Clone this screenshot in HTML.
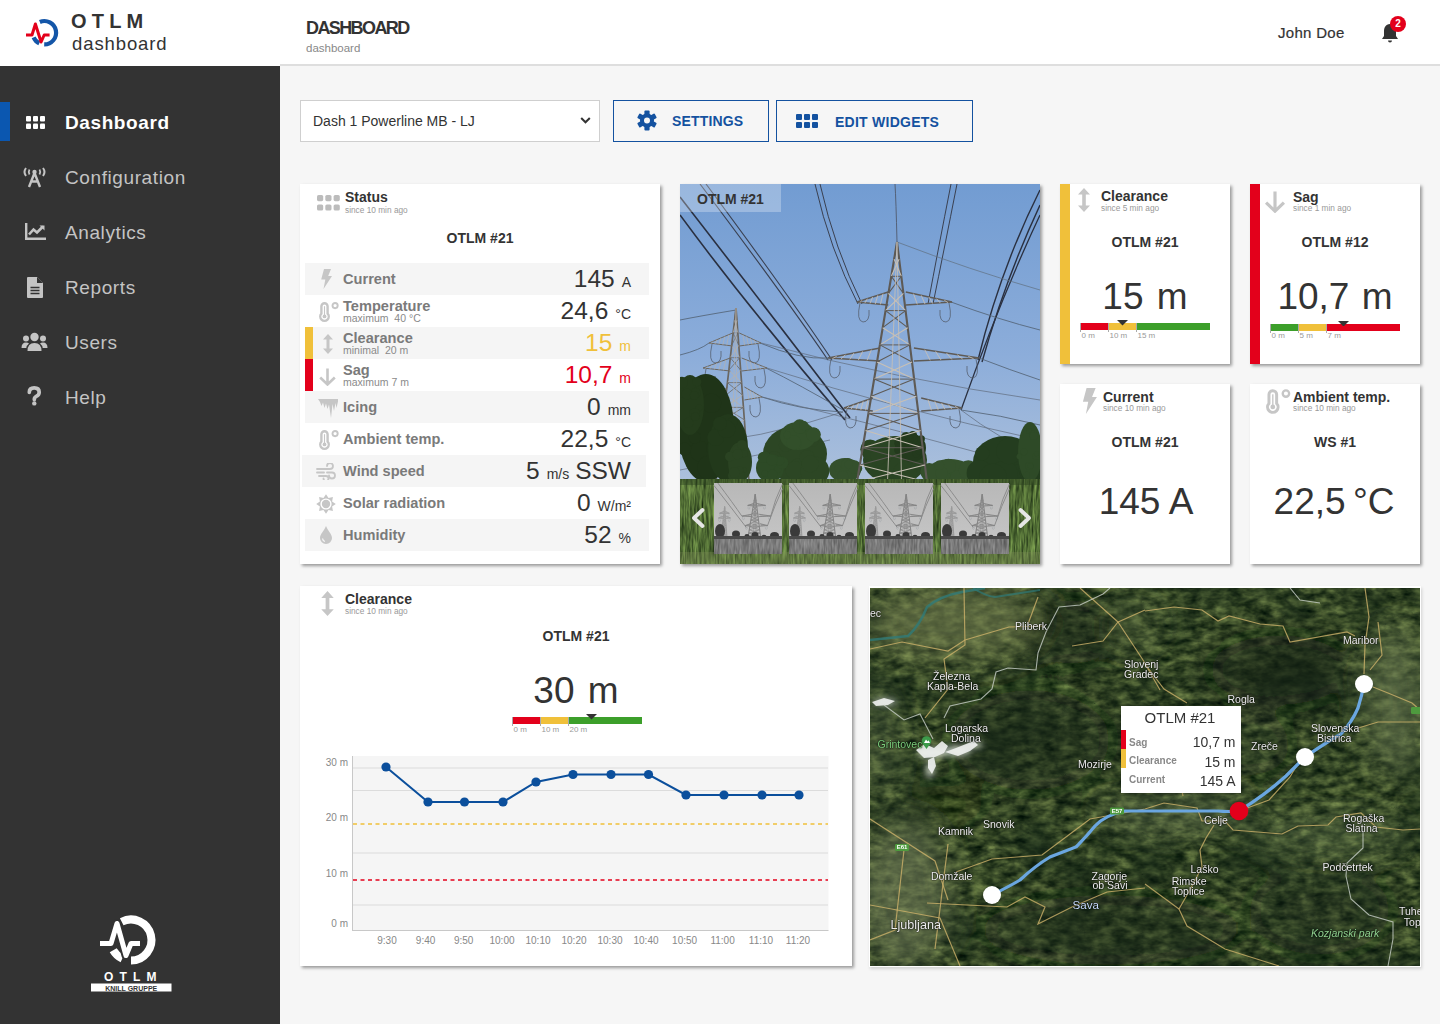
<!DOCTYPE html>
<html><head><meta charset="utf-8">
<style>
*{box-sizing:border-box;margin:0;padding:0}
html,body{width:1440px;height:1024px;overflow:hidden;background:#f6f6f6;font-family:"Liberation Sans",sans-serif;color:#333}
.abs{position:absolute}
#hdr{position:absolute;left:0;top:0;width:1440px;height:66px;background:#fff}
#side{position:absolute;left:0;top:66px;width:280px;height:958px;background:#333}
.nav{position:absolute;left:65px;font-size:19px;color:#c4c4c4;letter-spacing:0.6px;white-space:nowrap;line-height:19px}
.nav.act{color:#fff;font-weight:bold}
.nico{position:absolute}
.card{position:absolute;background:#fff;box-shadow:2px 2px 3px rgba(0,0,0,0.38)}
.t{position:absolute;white-space:nowrap}
</style></head>
<body>
<div id="hdr">
  <!-- logo -->
  <svg class="abs" style="left:20px;top:14px" width="40" height="40" viewBox="20 14 40 40">
    <path d="M39.83 21.98 A11.7 11.7 0 1 1 44.2 44.45" fill="none" stroke="#1456a8" stroke-width="4.2"/>
    <path d="M39.27 43.27 A11.7 11.7 0 0 1 33.63 37.32" fill="none" stroke="#1456a8" stroke-width="4.2"/>
    <path d="M26 35 H32 L35.4 24 L41.1 42 L44.2 35 H49.6" fill="none" stroke="#e3001b" stroke-width="3" stroke-linejoin="round"/>
  </svg>
  <div class="abs" style="left:71px;top:11px;font-size:20px;font-weight:bold;letter-spacing:5.2px;color:#333;line-height:20px">OTLM</div>
  <div class="abs" style="left:72px;top:34px;font-size:18.5px;letter-spacing:0.9px;color:#333;line-height:20px">dashboard</div>

  <div class="abs" style="left:306px;top:19px;font-size:18px;font-weight:bold;color:#333;line-height:18px;letter-spacing:-1.6px">DASHBOARD</div>
  <div class="abs" style="left:306px;top:42px;font-size:11.5px;color:#888;line-height:13px">dashboard</div>

  <div class="abs" style="left:1278px;top:24px;font-size:15px;color:#333;letter-spacing:0.3px;line-height:18px;-webkit-text-stroke:0.2px">John Doe</div>
  <svg class="abs" style="left:1380px;top:22px" width="20" height="22" viewBox="0 0 20 22">
    <path d="M10 2 C5.5 2 4 6 4 9.5 V14 L2 17 H18 L16 14 V9.5 C16 6 14.5 2 10 2Z" fill="#333"/>
    <path d="M8 18.5 H12 A2 2 0 0 1 8 18.5Z" fill="#333"/>
  </svg>
  <div class="abs" style="left:1390px;top:16px;width:16px;height:16px;border-radius:50%;background:#e3001b;color:#fff;font-size:10px;font-weight:bold;text-align:center;line-height:16px">2</div>
</div>

<div class="abs" style="left:280px;top:64px;width:1160px;height:2px;background:#dedede"></div>
<div id="side">
  <div class="abs" style="left:0;top:36px;width:10px;height:39px;background:#0b57b0"></div>
</div>
<div class="nav act" style="top:113px">Dashboard</div>
<div class="nav" style="top:168px">Configuration</div>
<div class="nav" style="top:223px">Analytics</div>
<div class="nav" style="top:278px">Reports</div>
<div class="nav" style="top:333px">Users</div>
<div class="nav" style="top:388px">Help</div>

<!-- sidebar icons -->
<svg class="abs" style="left:26px;top:116px" width="19" height="13" viewBox="0 0 19 13" fill="#fff">
 <rect x="0" y="0" width="5" height="5.5" rx="1"/><rect x="7" y="0" width="5" height="5.5" rx="1"/><rect x="14" y="0" width="5" height="5.5" rx="1"/>
 <rect x="0" y="7.5" width="5" height="5.5" rx="1"/><rect x="7" y="7.5" width="5" height="5.5" rx="1"/><rect x="14" y="7.5" width="5" height="5.5" rx="1"/>
</svg>
<svg class="abs" style="left:21px;top:166px" width="27" height="22" viewBox="0 0 27 22" fill="none" stroke="#c4c4c4">
 <path d="M5 2 Q2 6 5 10" stroke-width="2"/><path d="M22 2 Q25 6 22 10" stroke-width="2"/>
 <path d="M8.5 3.5 Q7 6 8.5 8.5" stroke-width="1.8"/><path d="M18.5 3.5 Q20 6 18.5 8.5" stroke-width="1.8"/>
 <circle cx="13.5" cy="6" r="2.2" fill="#c4c4c4" stroke="none"/>
 <path d="M13.5 7 L8 21 M13.5 7 L19 21 M10 15.5 H17" stroke-width="2.4"/>
</svg>
<svg class="abs" style="left:25px;top:223px" width="21" height="17" viewBox="0 0 21 17" fill="none" stroke="#c4c4c4">
 <path d="M1.2 0 V15.8 H21" stroke-width="2.4"/>
 <path d="M4 11.5 L8.5 6.5 L12 9.5 L18 3.5" stroke-width="2.6"/>
 <path d="M14.5 2.5 H19.5 V7.5Z" fill="#c4c4c4" stroke="none"/>
</svg>
<svg class="abs" style="left:27px;top:277px" width="16" height="21" viewBox="0 0 16 21">
 <path d="M0 1 Q0 0 1 0 H10 L16 6 V20 Q16 21 15 21 H1 Q0 21 0 20Z" fill="#c4c4c4"/>
 <path d="M10 0 V6 H16" fill="#333"/>
 <path d="M3.5 10.5 H12.5 M3.5 13.5 H12.5 M3.5 16.5 H12.5" stroke="#333" stroke-width="1.3"/>
</svg>
<svg class="abs" style="left:21px;top:332px" width="27" height="20" viewBox="0 0 27 20" fill="#c4c4c4">
 <circle cx="13.5" cy="5" r="4.2"/><circle cx="5" cy="6.5" r="3"/><circle cx="22" cy="6.5" r="3"/>
 <path d="M6.5 19 Q6.5 11 13.5 11 Q20.5 11 20.5 19Z"/>
 <path d="M0.5 16 Q0.5 10.5 5 10.5 Q7 10.5 8 11.5 Q5.5 13.5 5.3 16Z"/>
 <path d="M26.5 16 Q26.5 10.5 22 10.5 Q20 10.5 19 11.5 Q21.5 13.5 21.7 16Z"/>
</svg>
<svg class="abs" style="left:20px;top:380px" width="30" height="30" viewBox="20 380 30 30"><path d="M29.3 392.3 Q29.3 387.8 34.2 387.8 Q39.2 387.8 39.2 392.2 Q39.2 394.9 36.2 396.4 Q34.3 397.4 34.3 399.6" fill="none" stroke="#c4c4c4" stroke-width="3.7" stroke-linecap="round"/><circle cx="34.3" cy="403.4" r="2.2" fill="#c4c4c4"/></svg>

<!-- toolbar -->
<div class="abs" style="left:300px;top:100px;width:300px;height:42px;background:#fff;border:1px solid #cfcfcf"></div>
<div class="abs" style="left:313px;top:113px;font-size:14px;color:#333;line-height:16px">Dash 1 Powerline MB - LJ</div>
<svg class="abs" style="left:580px;top:116px" width="11" height="9" viewBox="0 0 11 9"><path d="M1.2 2 L5.5 6.3 L9.8 2" fill="none" stroke="#333" stroke-width="2"/></svg>
<div class="abs" style="left:613px;top:100px;width:156px;height:42px;border:1.5px solid #1452a0"></div>
<div class="abs" style="left:776px;top:100px;width:197px;height:42px;border:1.5px solid #1452a0"></div>
<div class="abs" style="left:672px;top:113px;font-size:14px;font-weight:bold;color:#1452a0;letter-spacing:0.15px;line-height:16px">SETTINGS</div>
<div class="abs" style="left:835px;top:114px;font-size:14px;font-weight:bold;color:#1452a0;letter-spacing:0.25px;line-height:16px">EDIT WIDGETS</div>
<svg class="abs" style="left:637px;top:110px" width="20" height="21" viewBox="-10 -10.5 20 21">
 <g fill="#1452a0">
 <circle r="7"/>
 <rect x="-2.6" y="-10" width="5.2" height="5" rx="1"/><rect x="-2.6" y="5" width="5.2" height="5" rx="1"/>
 <rect x="-2.6" y="-10" width="5.2" height="5" rx="1" transform="rotate(60)"/><rect x="-2.6" y="5" width="5.2" height="5" rx="1" transform="rotate(60)"/>
 <rect x="-2.6" y="-10" width="5.2" height="5" rx="1" transform="rotate(120)"/><rect x="-2.6" y="5" width="5.2" height="5" rx="1" transform="rotate(120)"/>
 </g>
 <circle r="3" fill="#f6f6f6"/>
</svg>
<svg class="abs" style="left:796px;top:114px" width="22" height="14" viewBox="0 0 22 14" fill="#1452a0">
 <rect x="0" y="0" width="6" height="6" rx="1"/><rect x="8" y="0" width="6" height="6" rx="1"/><rect x="16" y="0" width="6" height="6" rx="1"/>
 <rect x="0" y="8" width="6" height="6" rx="1"/><rect x="8" y="8" width="6" height="6" rx="1"/><rect x="16" y="8" width="6" height="6" rx="1"/>
</svg>




<div class="card" style="left:300px;top:184px;width:360px;height:380px"></div>
<svg class="abs" style="left:317px;top:195px;" width="23" height="16" viewBox="0 0 23 16"><g fill="#bcbcbc"><rect x="0" y="0" width="6.2" height="6.2" rx="1.6"/><rect x="0" y="9.4" width="6.2" height="6.2" rx="1.6"/><rect x="8.3" y="0" width="6.2" height="6.2" rx="1.6"/><rect x="8.3" y="9.4" width="6.2" height="6.2" rx="1.6"/><rect x="16.6" y="0" width="6.2" height="6.2" rx="1.6"/><rect x="16.6" y="9.4" width="6.2" height="6.2" rx="1.6"/></g></svg>
<div class="t" style="left:345px;top:190.15px;font-size:14px;line-height:14px;color:#333;font-weight:bold;">Status</div>
<div class="t" style="left:345px;top:205.97px;font-size:8.3px;line-height:8.3px;color:#999;">since 10 min ago</div>
<div class="t" style="left:180px;width:600px;text-align:center;top:231.15px;font-size:14px;line-height:14px;color:#333;font-weight:bold;">OTLM #21</div>
<div class="abs" style="left:305px;top:263px;width:344px;height:32px;background:#f5f5f5"></div>
<div class="t" style="left:343px;top:271.64px;font-size:14.6px;line-height:14.6px;color:#7a7a7a;font-weight:bold;">Current</div>
<div class="t" style="left:330px;top:267.26px;width:301px;text-align:right;font-size:24.5px;line-height:24.5px;color:#333;white-space:nowrap">145<span style="font-size:14px;margin-left:7px">A</span></div>
<div class="t" style="left:343px;top:299.14px;font-size:14.6px;line-height:14.6px;color:#7a7a7a;font-weight:bold;">Temperature</div>
<div class="t" style="left:343px;top:312.61px;font-size:10.5px;line-height:10.5px;color:#8a8a8a;">maximum&nbsp; 40 °C</div>
<div class="t" style="left:330px;top:299.26px;width:301px;text-align:right;font-size:24.5px;line-height:24.5px;color:#333;white-space:nowrap">24,6<span style="font-size:14px;margin-left:7px">°C</span></div>
<div class="abs" style="left:305px;top:327px;width:344px;height:32px;background:#f5f5f5"></div>
<div class="abs" style="left:305px;top:327px;width:8px;height:32px;background:#f0c03a"></div>
<div class="t" style="left:343px;top:331.14px;font-size:14.6px;line-height:14.6px;color:#7a7a7a;font-weight:bold;">Clearance</div>
<div class="t" style="left:343px;top:344.61px;font-size:10.5px;line-height:10.5px;color:#8a8a8a;">minimal&nbsp; 20 m</div>
<div class="t" style="left:330px;top:331.26px;width:301px;text-align:right;font-size:24.5px;line-height:24.5px;color:#f0c03a;white-space:nowrap">15<span style="font-size:14px;margin-left:7px">m</span></div>
<div class="abs" style="left:305px;top:359px;width:8px;height:32px;background:#e3001b"></div>
<div class="t" style="left:343px;top:363.14px;font-size:14.6px;line-height:14.6px;color:#7a7a7a;font-weight:bold;">Sag</div>
<div class="t" style="left:343px;top:376.61px;font-size:10.5px;line-height:10.5px;color:#8a8a8a;">maximum 7 m</div>
<div class="t" style="left:330px;top:363.26px;width:301px;text-align:right;font-size:24.5px;line-height:24.5px;color:#e3001b;white-space:nowrap">10,7<span style="font-size:14px;margin-left:7px">m</span></div>
<div class="abs" style="left:305px;top:391px;width:344px;height:32px;background:#f5f5f5"></div>
<div class="t" style="left:343px;top:399.64px;font-size:14.6px;line-height:14.6px;color:#7a7a7a;font-weight:bold;">Icing</div>
<div class="t" style="left:330px;top:395.26px;width:301px;text-align:right;font-size:24.5px;line-height:24.5px;color:#333;white-space:nowrap">0<span style="font-size:14px;margin-left:7px">mm</span></div>
<div class="t" style="left:343px;top:431.64px;font-size:14.6px;line-height:14.6px;color:#7a7a7a;font-weight:bold;">Ambient temp.</div>
<div class="t" style="left:330px;top:427.26px;width:301px;text-align:right;font-size:24.5px;line-height:24.5px;color:#333;white-space:nowrap">22,5<span style="font-size:14px;margin-left:7px">°C</span></div>
<div class="abs" style="left:302px;top:455px;width:344px;height:32px;background:#f5f5f5"></div>
<div class="t" style="left:343px;top:463.64px;font-size:14.6px;line-height:14.6px;color:#7a7a7a;font-weight:bold;">Wind speed</div>
<div class="t" style="left:330px;top:459.26px;width:301px;text-align:right;font-size:24.5px;line-height:24.5px;color:#333;white-space:nowrap">5<span style="font-size:14px;margin-left:7px;margin-right:6px">m/s</span>SSW</div>
<div class="t" style="left:343px;top:495.64px;font-size:14.6px;line-height:14.6px;color:#7a7a7a;font-weight:bold;">Solar radiation</div>
<div class="t" style="left:330px;top:491.26px;width:301px;text-align:right;font-size:24.5px;line-height:24.5px;color:#333;white-space:nowrap">0<span style="font-size:14px;margin-left:7px">W/m²</span></div>
<div class="abs" style="left:305px;top:519px;width:344px;height:32px;background:#f5f5f5"></div>
<div class="t" style="left:343px;top:527.64px;font-size:14.6px;line-height:14.6px;color:#7a7a7a;font-weight:bold;">Humidity</div>
<div class="t" style="left:330px;top:523.26px;width:301px;text-align:right;font-size:24.5px;line-height:24.5px;color:#333;white-space:nowrap">52<span style="font-size:14px;margin-left:7px">%</span></div>
<svg class="abs" style="left:319px;top:269px;" width="13" height="20" viewBox="0 0 13 20"><path d="M5 0 H12 L9.2 7 H13 L4.5 20 L6.3 10.5 H2.2 Z" fill="#c6c6c6"/></svg>
<svg class="abs" style="left:319px;top:302px;" width="21" height="20" viewBox="0 0 21 20"><path d="M2.4 11.6 V4.35 A3.1 3.1 0 0 1 8.6 4.35 V11.6 A4.25 4.25 0 1 1 2.4 11.6 Z" fill="none" stroke="#c6c6c6" stroke-width="2.4"/><circle cx="5.5" cy="14.4" r="1.9" fill="#c6c6c6"/><rect x="4.95" y="4.2" width="1.1" height="10" fill="#c6c6c6"/><circle cx="16.1" cy="3.6" r="2.6" fill="none" stroke="#c6c6c6" stroke-width="1.9"/></svg>
<svg class="abs" style="left:323px;top:334px;" width="10" height="20" viewBox="0 0 10 20"><path d="M5 0 L10 5.5 H6.5 V14.5 H10 L5 20 L0 14.5 H3.5 V5.5 H0Z" fill="#c6c6c6"/></svg>
<svg class="abs" style="left:319px;top:368px;" width="17" height="18" viewBox="0 0 17 18"><path d="M8.5 0.5 V16.5 M1.2 9.5 L8.5 16.5 L15.8 9.5" fill="none" stroke="#c6c6c6" stroke-width="2.6"/></svg>
<svg class="abs" style="left:318px;top:399px;" width="20" height="19" viewBox="0 0 20 19"><path d="M0 0 H20 V2.5 L18.5 9 L17.5 4 L16 12 L14.5 5 L13 19 L11 5.5 L9.5 10 L8 4.5 L6.5 9 L5 3.5 L3.5 7 L2 3Z" fill="#c6c6c6"/></svg>
<svg class="abs" style="left:319px;top:430px;" width="21" height="20" viewBox="0 0 21 20"><path d="M2.4 11.6 V4.35 A3.1 3.1 0 0 1 8.6 4.35 V11.6 A4.25 4.25 0 1 1 2.4 11.6 Z" fill="none" stroke="#c6c6c6" stroke-width="2.4"/><circle cx="5.5" cy="14.4" r="1.9" fill="#c6c6c6"/><rect x="4.95" y="4.2" width="1.1" height="10" fill="#c6c6c6"/><circle cx="16.1" cy="3.6" r="2.6" fill="none" stroke="#c6c6c6" stroke-width="1.9"/></svg>
<svg class="abs" style="left:316px;top:463px;" width="21" height="17" viewBox="0 0 21 17"><g fill="none" stroke="#c6c6c6" stroke-width="1.8" stroke-linecap="round"><path d="M1 6 H14 A3 3 0 1 0 11 3"/><path d="M1 9.5 H8"/><path d="M11 9.5 H16 A3 3 0 1 1 13 12.5"/><path d="M3 13 H10 A2.5 2.5 0 1 1 7.5 15.5"/></g></svg>
<svg class="abs" style="left:316px;top:494px;" width="20" height="20" viewBox="-10 -10 20 20"><polygon points="0.00,-9.80 2.53,-6.10 6.93,-6.93 6.10,-2.53 9.80,0.00 6.10,2.53 6.93,6.93 2.53,6.10 0.00,9.80 -2.53,6.10 -6.93,6.93 -6.10,2.53 -9.80,0.00 -6.10,-2.53 -6.93,-6.93 -2.53,-6.10" fill="#c6c6c6"/><circle r="5.6" fill="#fff"/><circle r="4.2" fill="#c6c6c6"/></svg>
<svg class="abs" style="left:319px;top:526px;" width="14" height="18" viewBox="0 0 14 18"><path d="M7 0 C9 5 13 8 13 12 A6 6 0 0 1 1 12 C1 8 5 5 7 0Z" fill="#c6c6c6"/><path d="M3.5 12.5 A3.5 3.5 0 0 0 6 15.5" fill="none" stroke="#f5f5f5" stroke-width="1.3"/></svg>
<div class="card" style="left:1060px;top:184px;width:170px;height:180px"></div>
<div class="abs" style="left:1060px;top:184px;width:10px;height:180px;background:#f0c03a"></div>
<svg class="abs" style="left:1078px;top:188px;" width="12" height="24" viewBox="0 0 10 20"><path d="M5 0 L10 5.5 H6.5 V14.5 H10 L5 20 L0 14.5 H3.5 V5.5 H0Z" fill="#c6c6c6"/></svg>
<div class="t" style="left:1101px;top:188.65px;font-size:14px;line-height:14px;color:#333;font-weight:bold;">Clearance</div>
<div class="t" style="left:1101px;top:203.97px;font-size:8.3px;line-height:8.3px;color:#999;">since 5 min ago</div>
<div class="t" style="left:845px;width:600px;text-align:center;top:234.65px;font-size:14px;line-height:14px;color:#333;font-weight:bold;">OTLM #21</div>
<div class="t" style="left:845px;width:600px;text-align:center;top:278.18px;font-size:37px;line-height:37px;color:#333;word-spacing:3px">15 m</div>
<div class="abs" style="left:1080px;top:323px;width:28px;height:7px;background:#e3001b"></div>
<div class="abs" style="left:1108px;top:323px;width:28px;height:7px;background:#f0c03a"></div>
<div class="abs" style="left:1136px;top:323px;width:74px;height:7px;background:#3c9f2a"></div>
<div class="abs" style="left:1080px;top:323px;width:1px;height:9px;background:#aaa"></div>
<div class="abs" style="left:1108px;top:323px;width:1px;height:9px;background:#aaa"></div>
<div class="abs" style="left:1136px;top:323px;width:1px;height:9px;background:#aaa"></div>
<div class="t" style="left:1081.5px;top:331.73px;font-size:8px;line-height:8px;color:#999;">0 m</div>
<div class="t" style="left:1109.5px;top:331.73px;font-size:8px;line-height:8px;color:#999;">10 m</div>
<div class="t" style="left:1137.5px;top:331.73px;font-size:8px;line-height:8px;color:#999;">15 m</div>
<svg class="abs" style="left:1116.5px;top:320px;" width="11" height="5.5" viewBox="0 0 11 5.5"><path d="M0 0 H11 L5.5 5.5Z" fill="#333"/></svg>
<div class="card" style="left:1250px;top:184px;width:170px;height:180px"></div>
<div class="abs" style="left:1250px;top:184px;width:10px;height:180px;background:#e3001b"></div>
<svg class="abs" style="left:1264px;top:191px;" width="22" height="22" viewBox="0 0 17 18"><path d="M8.5 0.5 V16.5 M1.2 9.5 L8.5 16.5 L15.8 9.5" fill="none" stroke="#c6c6c6" stroke-width="2.6"/></svg>
<div class="t" style="left:1293px;top:189.65px;font-size:14px;line-height:14px;color:#333;font-weight:bold;">Sag</div>
<div class="t" style="left:1293px;top:204.47px;font-size:8.3px;line-height:8.3px;color:#999;">since 1 min ago</div>
<div class="t" style="left:1035px;width:600px;text-align:center;top:235.15px;font-size:14px;line-height:14px;color:#333;font-weight:bold;">OTLM #12</div>
<div class="t" style="left:1035px;width:600px;text-align:center;top:278.18px;font-size:37px;line-height:37px;color:#333;word-spacing:2px">10,7 m</div>
<div class="abs" style="left:1270px;top:323.5px;width:28px;height:7px;background:#3c9f2a"></div>
<div class="abs" style="left:1298px;top:323.5px;width:28px;height:7px;background:#f0c03a"></div>
<div class="abs" style="left:1326px;top:323.5px;width:74px;height:7px;background:#e3001b"></div>
<div class="abs" style="left:1270px;top:323.5px;width:1px;height:9px;background:#aaa"></div>
<div class="abs" style="left:1298px;top:323.5px;width:1px;height:9px;background:#aaa"></div>
<div class="abs" style="left:1326px;top:323.5px;width:1px;height:9px;background:#aaa"></div>
<div class="t" style="left:1271.5px;top:332.23px;font-size:8px;line-height:8px;color:#999;">0 m</div>
<div class="t" style="left:1299.5px;top:332.23px;font-size:8px;line-height:8px;color:#999;">5 m</div>
<div class="t" style="left:1327.5px;top:332.23px;font-size:8px;line-height:8px;color:#999;">7 m</div>
<svg class="abs" style="left:1337.5px;top:320.5px;" width="11" height="5.5" viewBox="0 0 11 5.5"><path d="M0 0 H11 L5.5 5.5Z" fill="#333"/></svg>
<div class="card" style="left:1060px;top:384px;width:170px;height:180px"></div>
<svg class="abs" style="left:1080px;top:388px;" width="17" height="26" viewBox="0 0 13 20"><path d="M5 0 H12 L9.2 7 H13 L4.5 20 L6.3 10.5 H2.2 Z" fill="#c6c6c6"/></svg>
<div class="t" style="left:1103px;top:389.65px;font-size:14px;line-height:14px;color:#333;font-weight:bold;">Current</div>
<div class="t" style="left:1103px;top:404.47px;font-size:8.3px;line-height:8.3px;color:#999;">since 10 min ago</div>
<div class="t" style="left:845px;width:600px;text-align:center;top:434.65px;font-size:14px;line-height:14px;color:#333;font-weight:bold;">OTLM #21</div>
<div class="t" style="left:846px;width:600px;text-align:center;top:482.68px;font-size:37px;line-height:37px;color:#333;">145 A</div>
<div class="card" style="left:1250px;top:384px;width:170px;height:180px"></div>
<svg class="abs" style="left:1266px;top:389px;" width="26" height="25" viewBox="0 0 21 20"><path d="M2.4 11.6 V4.35 A3.1 3.1 0 0 1 8.6 4.35 V11.6 A4.25 4.25 0 1 1 2.4 11.6 Z" fill="none" stroke="#c6c6c6" stroke-width="2.4"/><circle cx="5.5" cy="14.4" r="1.9" fill="#c6c6c6"/><rect x="4.95" y="4.2" width="1.1" height="10" fill="#c6c6c6"/><circle cx="16.1" cy="3.6" r="2.6" fill="none" stroke="#c6c6c6" stroke-width="1.9"/></svg>
<div class="t" style="left:1293px;top:389.65px;font-size:14px;line-height:14px;color:#333;font-weight:bold;">Ambient temp.</div>
<div class="t" style="left:1293px;top:404.47px;font-size:8.3px;line-height:8.3px;color:#999;">since 10 min ago</div>
<div class="t" style="left:1035px;width:600px;text-align:center;top:434.65px;font-size:14px;line-height:14px;color:#333;font-weight:bold;">WS #1</div>
<div class="t" style="left:1034px;width:600px;text-align:center;top:482.68px;font-size:37px;line-height:37px;color:#333;word-spacing:-3px">22,5 °C</div>
<div class="card" style="left:300px;top:586px;width:552px;height:380px"></div>
<svg class="abs" style="left:321px;top:591px;" width="13" height="25" viewBox="0 0 10 20"><path d="M5 0 L10 5.5 H6.5 V14.5 H10 L5 20 L0 14.5 H3.5 V5.5 H0Z" fill="#c6c6c6"/></svg>
<div class="t" style="left:345px;top:592.15px;font-size:14px;line-height:14px;color:#333;font-weight:bold;">Clearance</div>
<div class="t" style="left:345px;top:606.97px;font-size:8.3px;line-height:8.3px;color:#999;">since 10 min ago</div>
<div class="t" style="left:276px;width:600px;text-align:center;top:628.65px;font-size:14px;line-height:14px;color:#333;font-weight:bold;">OTLM #21</div>
<div class="t" style="left:276px;width:600px;text-align:center;top:671.68px;font-size:37px;line-height:37px;color:#333;word-spacing:3px">30 m</div>
<div class="abs" style="left:512px;top:717px;width:28px;height:7px;background:#e3001b"></div>
<div class="abs" style="left:540px;top:717px;width:28px;height:7px;background:#f0c03a"></div>
<div class="abs" style="left:568px;top:717px;width:74px;height:7px;background:#3c9f2a"></div>
<div class="abs" style="left:512px;top:717px;width:1px;height:9px;background:#aaa"></div>
<div class="abs" style="left:540px;top:717px;width:1px;height:9px;background:#aaa"></div>
<div class="abs" style="left:568px;top:717px;width:1px;height:9px;background:#aaa"></div>
<div class="t" style="left:513.5px;top:725.73px;font-size:8px;line-height:8px;color:#999;">0 m</div>
<div class="t" style="left:541.5px;top:725.73px;font-size:8px;line-height:8px;color:#999;">10 m</div>
<div class="t" style="left:569.5px;top:725.73px;font-size:8px;line-height:8px;color:#999;">20 m</div>
<svg class="abs" style="left:585.5px;top:714px;" width="11" height="5.5" viewBox="0 0 11 5.5"><path d="M0 0 H11 L5.5 5.5Z" fill="#333"/></svg>
<svg class="abs" style="left:0;top:0" width="1440" height="1024"><rect x="353" y="756" width="475.5" height="174.5" fill="#f5f5f5"/><line x1="353" x2="828" y1="768" y2="768" stroke="#dcdcdc" stroke-width="1.2"/><line x1="353" x2="828" y1="790.5" y2="790.5" stroke="#dcdcdc" stroke-width="1.2"/><line x1="353" x2="828" y1="853" y2="853" stroke="#dcdcdc" stroke-width="1.2"/><line x1="353" x2="828" y1="905" y2="905" stroke="#dcdcdc" stroke-width="1.2"/><line x1="352.5" x2="352.5" y1="756" y2="931" stroke="#c8c8c8" stroke-width="1"/><line x1="352" x2="828.5" y1="930.5" y2="930.5" stroke="#c8c8c8" stroke-width="1"/><line x1="353" x2="828" y1="824" y2="824" stroke="#f0c03a" stroke-width="1.6" stroke-dasharray="4,3.5"/><line x1="353" x2="828" y1="880" y2="880" stroke="#e3001b" stroke-width="1.6" stroke-dasharray="4,3.5"/><polyline points="386,767 428,802 464.5,802 503,802 536,782 573,774.5 611,774.5 648.5,774.5 686,795 724,795 762,795 799,795" fill="none" stroke="#0b4f9c" stroke-width="2"/><circle cx="386" cy="767" r="4.6" fill="#0b4f9c"/><circle cx="428" cy="802" r="4.6" fill="#0b4f9c"/><circle cx="464.5" cy="802" r="4.6" fill="#0b4f9c"/><circle cx="503" cy="802" r="4.6" fill="#0b4f9c"/><circle cx="536" cy="782" r="4.6" fill="#0b4f9c"/><circle cx="573" cy="774.5" r="4.6" fill="#0b4f9c"/><circle cx="611" cy="774.5" r="4.6" fill="#0b4f9c"/><circle cx="648.5" cy="774.5" r="4.6" fill="#0b4f9c"/><circle cx="686" cy="795" r="4.6" fill="#0b4f9c"/><circle cx="724" cy="795" r="4.6" fill="#0b4f9c"/><circle cx="762" cy="795" r="4.6" fill="#0b4f9c"/><circle cx="799" cy="795" r="4.6" fill="#0b4f9c"/></svg>
<div class="t" style="left:-252px;width:600px;text-align:right;top:757.53px;font-size:10px;line-height:10px;color:#888;">30 m</div>
<div class="t" style="left:-252px;width:600px;text-align:right;top:813.03px;font-size:10px;line-height:10px;color:#888;">20 m</div>
<div class="t" style="left:-252px;width:600px;text-align:right;top:868.53px;font-size:10px;line-height:10px;color:#888;">10 m</div>
<div class="t" style="left:-252px;width:600px;text-align:right;top:918.53px;font-size:10px;line-height:10px;color:#888;">0 m</div>
<div class="t" style="left:87px;width:600px;text-align:center;top:935.53px;font-size:10px;line-height:10px;color:#888;">9:30</div>
<div class="t" style="left:125.60000000000002px;width:600px;text-align:center;top:935.53px;font-size:10px;line-height:10px;color:#888;">9:40</div>
<div class="t" style="left:163.7px;width:600px;text-align:center;top:935.53px;font-size:10px;line-height:10px;color:#888;">9:50</div>
<div class="t" style="left:202px;width:600px;text-align:center;top:935.53px;font-size:10px;line-height:10px;color:#888;">10:00</div>
<div class="t" style="left:238px;width:600px;text-align:center;top:935.53px;font-size:10px;line-height:10px;color:#888;">10:10</div>
<div class="t" style="left:274px;width:600px;text-align:center;top:935.53px;font-size:10px;line-height:10px;color:#888;">10:20</div>
<div class="t" style="left:310px;width:600px;text-align:center;top:935.53px;font-size:10px;line-height:10px;color:#888;">10:30</div>
<div class="t" style="left:346px;width:600px;text-align:center;top:935.53px;font-size:10px;line-height:10px;color:#888;">10:40</div>
<div class="t" style="left:384.6px;width:600px;text-align:center;top:935.53px;font-size:10px;line-height:10px;color:#888;">10:50</div>
<div class="t" style="left:422.6px;width:600px;text-align:center;top:935.53px;font-size:10px;line-height:10px;color:#888;">11:00</div>
<div class="t" style="left:461px;width:600px;text-align:center;top:935.53px;font-size:10px;line-height:10px;color:#888;">11:10</div>
<div class="t" style="left:498px;width:600px;text-align:center;top:935.53px;font-size:10px;line-height:10px;color:#888;">11:20</div>
<div class="card" style="left:680px;top:184px;width:360px;height:380px"></div>
<svg class="abs" style="left:680px;top:184px" width="360" height="380" viewBox="680 184 360 380"><defs>
<linearGradient id="sky" x1="0" y1="0" x2="0" y2="1">
<stop offset="0" stop-color="#729cd2"/><stop offset="0.45" stop-color="#8cadda"/><stop offset="0.8" stop-color="#adc1dc"/><stop offset="1" stop-color="#bac7da"/>
</linearGradient>
<linearGradient id="field" x1="0" y1="0" x2="0" y2="1">
<stop offset="0" stop-color="#7d9c55"/><stop offset="0.5" stop-color="#5f8a3c"/><stop offset="0.85" stop-color="#4f7a30"/><stop offset="1" stop-color="#7b8a55"/>
</linearGradient>
<linearGradient id="tsky" x1="0" y1="0" x2="0" y2="1">
<stop offset="0" stop-color="#b8b8b8"/><stop offset="1" stop-color="#c8c8c8"/>
</linearGradient>
<filter id="ftex" x="0" y="0" width="100%" height="100%" color-interpolation-filters="sRGB">
<feTurbulence type="fractalNoise" baseFrequency="0.45 0.05" numOctaves="3" seed="9"/>
<feColorMatrix type="matrix" values="0.55 0 0 0 0.04  0.65 0 0 0 0.1  0.35 0 0 0 0.03  0 0 0 0 1"/>
</filter>
<filter id="gtex" x="0" y="0" width="100%" height="100%" color-interpolation-filters="sRGB">
<feTurbulence type="fractalNoise" baseFrequency="0.45 0.08" numOctaves="2" seed="4"/>
<feColorMatrix type="matrix" values="0.35 0 0 0 0.3  0.35 0 0 0 0.3  0.35 0 0 0 0.3  0 0 0 0 1"/>
</filter>
<clipPath id="pc"><rect x="680" y="184" width="360" height="380"/></clipPath>
</defs>
<g clip-path="url(#pc)">
<rect x="680" y="184" width="360" height="380" fill="url(#sky)"/>
<path d="M680 197 Q760 300 850 418" fill="none" stroke="#2a3040" stroke-width="1.6"/><path d="M680 215 Q750 310 845 420" fill="none" stroke="#2a3040" stroke-width="1.6"/><path d="M700 184 Q780 290 828 360" fill="none" stroke="#3a4050" stroke-width="1.1"/><path d="M706 184 Q785 290 832 360" fill="none" stroke="#3a4050" stroke-width="1.1"/><path d="M815 184 Q830 250 858 304" fill="none" stroke="#3a4050" stroke-width="1.0"/><path d="M820 184 Q835 250 862 304" fill="none" stroke="#3a4050" stroke-width="1.0"/><path d="M951 184 Q938 250 928 304" fill="none" stroke="#3a4050" stroke-width="1.0"/><path d="M957 184 Q944 250 933 304" fill="none" stroke="#3a4050" stroke-width="1.0"/><path d="M1040 190 Q1000 270 978 360" fill="none" stroke="#2a3040" stroke-width="1.4"/><path d="M1040 205 Q1005 280 982 362" fill="none" stroke="#2a3040" stroke-width="1.4"/><path d="M1040 215 Q1000 300 961 410" fill="none" stroke="#2a3040" stroke-width="1.3"/><path d="M895 184 Q896 200 897 242" fill="none" stroke="#4a5060" stroke-width="0.8"/><path d="M680 320 Q700 316 736 310" fill="none" stroke="#506070" stroke-width="0.8"/><path d="M680 355 Q700 350 709 343" fill="none" stroke="#506070" stroke-width="0.8"/><path d="M760 343 Q800 360 828 358" fill="none" stroke="#506070" stroke-width="0.8"/><path d="M766 368 Q800 385 843 410" fill="none" stroke="#506070" stroke-width="0.8"/><path d="M762 397 Q800 410 843 412" fill="none" stroke="#506070" stroke-width="0.8"/><path d="M951 302 Q1000 320 1040 330" fill="none" stroke="#506070" stroke-width="0.8"/><path d="M979 358 Q1010 370 1040 380" fill="none" stroke="#506070" stroke-width="0.8"/><path d="M961 410 Q1000 415 1040 425" fill="none" stroke="#506070" stroke-width="0.8"/><path d="M897 242 Q970 270 1040 290" fill="none" stroke="#607080" stroke-width="0.7"/><path d="M680 445 Q760 440 843 412" fill="none" stroke="#606c7c" stroke-width="0.7"/><path d="M680 470 Q760 455 830 440" fill="none" stroke="#606c7c" stroke-width="0.7"/><path d="M762 397 Q900 430 1040 470" fill="none" stroke="#606c7c" stroke-width="0.7"/><path d="M761 343 Q900 380 1040 400" fill="none" stroke="#606c7c" stroke-width="0.7"/><path d="M767 368 Q900 410 1040 440" fill="none" stroke="#606c7c" stroke-width="0.7"/><path d="M961 410 Q1000 440 1040 455" fill="none" stroke="#606c7c" stroke-width="0.7"/><path d="M736 308 L716 482 M736 308 L749 482" stroke="#6a6660" stroke-width="1.7" fill="none"/><path d="M736.0 308.0 L736.9 320.4 M736.0 308.0 L734.6 320.4" stroke="#6a6660" stroke-width="0.75" fill="none"/><path d="M734.6 320.4 L737.9 332.9 M736.9 320.4 L733.1 332.9" stroke="#b8b2aa" stroke-width="0.75" fill="none"/><path d="M733.1 332.9 L737.9 332.9" stroke="#6a6660" stroke-width="0.7" fill="none"/><path d="M733.1 332.9 L738.8 345.3 M737.9 332.9 L731.7 345.3" stroke="#6a6660" stroke-width="0.75" fill="none"/><path d="M731.7 345.3 L739.7 357.7 M738.8 345.3 L730.3 357.7" stroke="#b8b2aa" stroke-width="0.75" fill="none"/><path d="M730.3 357.7 L739.7 357.7" stroke="#6a6660" stroke-width="0.7" fill="none"/><path d="M730.3 357.7 L740.6 370.1 M739.7 357.7 L728.9 370.1" stroke="#6a6660" stroke-width="0.75" fill="none"/><path d="M728.9 370.1 L741.6 382.6 M740.6 370.1 L727.4 382.6" stroke="#b8b2aa" stroke-width="0.75" fill="none"/><path d="M727.4 382.6 L741.6 382.6" stroke="#6a6660" stroke-width="0.7" fill="none"/><path d="M727.4 382.6 L742.5 395.0 M741.6 382.6 L726.0 395.0" stroke="#6a6660" stroke-width="0.75" fill="none"/><path d="M726.0 395.0 L743.4 407.4 M742.5 395.0 L724.6 407.4" stroke="#b8b2aa" stroke-width="0.75" fill="none"/><path d="M724.6 407.4 L743.4 407.4" stroke="#6a6660" stroke-width="0.7" fill="none"/><path d="M724.6 407.4 L744.4 419.9 M743.4 407.4 L723.1 419.9" stroke="#6a6660" stroke-width="0.75" fill="none"/><path d="M723.1 419.9 L745.3 432.3 M744.4 419.9 L721.7 432.3" stroke="#b8b2aa" stroke-width="0.75" fill="none"/><path d="M721.7 432.3 L745.3 432.3" stroke="#6a6660" stroke-width="0.7" fill="none"/><path d="M721.7 432.3 L746.2 444.7 M745.3 432.3 L720.3 444.7" stroke="#6a6660" stroke-width="0.75" fill="none"/><path d="M720.3 444.7 L747.1 457.1 M746.2 444.7 L718.9 457.1" stroke="#b8b2aa" stroke-width="0.75" fill="none"/><path d="M718.9 457.1 L747.1 457.1" stroke="#6a6660" stroke-width="0.7" fill="none"/><path d="M718.9 457.1 L748.1 469.6 M747.1 457.1 L717.4 469.6" stroke="#6a6660" stroke-width="0.75" fill="none"/><path d="M717.4 469.6 L749.0 482.0 M748.1 469.6 L716.0 482.0" stroke="#b8b2aa" stroke-width="0.75" fill="none"/><path d="M716.0 482.0 L749.0 482.0" stroke="#6a6660" stroke-width="0.7" fill="none"/><path d="M736 308 L731.0 482 M736 308 L737.5 482" stroke="#b8b2aa" stroke-width="0.6" fill="none"/><path d="M732.7 333.0 L709 343 L732.7 346 M739.3 333.0 L761 343 L739.3 346" stroke="#6a6660" stroke-width="1.0" fill="none"/><path d="M728.7 334.7 L726.8 345.4 M742.9 334.7 L744.7 345.4 M724.8 336.3 L722.8 345.0 M746.5 336.3 L748.4 345.0 M720.8 338.0 L718.9 344.5 M750.2 338.0 L752.0 344.5 M716.9 339.7 L714.9 344.1 M753.8 339.7 L755.6 344.1 M712.9 341.3 L711.0 343.7 M757.4 341.3 L759.2 343.7 " stroke="#b8b2aa" stroke-width="0.6" fill="none"/><path d="M712 344 q-4 18 3 19 q7 0 6-12 M758 344 q4 18 -3 19 q-7 0 -6-12" stroke="#556070" stroke-width="0.8" fill="none"/><path d="M730.3 358.0 L703 368 L730.3 371 M741.7 358.0 L767 368 L741.7 371" stroke="#6a6660" stroke-width="1.0" fill="none"/><path d="M725.8 359.7 L723.5 370.4 M745.9 359.7 L748.0 370.4 M721.2 361.3 L718.9 370.0 M750.1 361.3 L752.2 370.0 M716.7 363.0 L714.4 369.5 M754.3 363.0 L756.5 369.5 M712.1 364.7 L709.8 369.1 M758.6 364.7 L760.7 369.1 M707.6 366.3 L705.3 368.7 M762.8 366.3 L764.9 368.7 " stroke="#b8b2aa" stroke-width="0.6" fill="none"/><path d="M706 369 q-4 18 3 19 q7 0 6-12 M764 369 q4 18 -3 19 q-7 0 -6-12" stroke="#556070" stroke-width="0.8" fill="none"/><path d="M727.6 387.0 L716 397 L727.6 400 M744.4 387.0 L762 397 L744.4 400" stroke="#6a6660" stroke-width="1.0" fill="none"/><path d="M725.6 388.7 L724.7 399.4 M747.4 388.7 L748.8 399.4 M723.7 390.3 L722.7 399.0 M750.3 390.3 L751.8 399.0 M721.8 392.0 L720.8 398.5 M753.2 392.0 L754.7 398.5 M719.9 393.7 L718.9 398.1 M756.1 393.7 L757.6 398.1 M717.9 395.3 L717.0 397.7 M759.1 395.3 L760.5 397.7 " stroke="#b8b2aa" stroke-width="0.6" fill="none"/><path d="M719 398 q-4 18 3 19 q7 0 6-12 M759 398 q4 18 -3 19 q-7 0 -6-12" stroke="#556070" stroke-width="0.8" fill="none"/><ellipse cx="706" cy="428" rx="28" ry="54" fill="#1f3418"/><circle cx="700.0" cy="451.3" r="10.2" fill="#1f3418"/><circle cx="723.5" cy="444.5" r="8.2" fill="#1f3418"/><circle cx="723.8" cy="441.1" r="5.9" fill="#1f3418"/><circle cx="694.8" cy="437.6" r="6.2" fill="#1f3418"/><circle cx="684.7" cy="449.1" r="6.5" fill="#1f3418"/><circle cx="709.5" cy="467.7" r="12.2" fill="#1f3418"/><circle cx="690.7" cy="412.5" r="12.4" fill="#1f3418"/><circle cx="729.4" cy="441.6" r="7.6" fill="#1f3418"/><circle cx="714.0" cy="447.8" r="7.8" fill="#1f3418"/><circle cx="711.6" cy="403.3" r="9.7" fill="#1f3418"/><ellipse cx="728" cy="448" rx="20" ry="34" fill="#22391b"/><circle cx="720.2" cy="432.3" r="6.7" fill="#22391b"/><circle cx="736.0" cy="453.7" r="5.0" fill="#22391b"/><circle cx="722.6" cy="428.5" r="5.6" fill="#22391b"/><circle cx="716.8" cy="436.7" r="5.5" fill="#22391b"/><circle cx="732.3" cy="422.3" r="5.2" fill="#22391b"/><circle cx="715.7" cy="437.5" r="8.4" fill="#22391b"/><circle cx="726.5" cy="429.2" r="8.9" fill="#22391b"/><circle cx="737.3" cy="462.5" r="7.8" fill="#22391b"/><circle cx="735.7" cy="466.6" r="4.2" fill="#22391b"/><circle cx="719.9" cy="423.7" r="6.9" fill="#22391b"/><ellipse cx="690" cy="405" rx="14" ry="30" fill="#243b1c"/><circle cx="695.7" cy="392.9" r="5.2" fill="#243b1c"/><circle cx="681.6" cy="393.0" r="4.4" fill="#243b1c"/><circle cx="696.9" cy="381.7" r="4.5" fill="#243b1c"/><circle cx="686.9" cy="393.9" r="5.3" fill="#243b1c"/><circle cx="682.0" cy="382.4" r="5.7" fill="#243b1c"/><circle cx="688.2" cy="422.9" r="5.1" fill="#243b1c"/><circle cx="699.1" cy="407.8" r="3.4" fill="#243b1c"/><circle cx="694.5" cy="413.7" r="5.5" fill="#243b1c"/><circle cx="695.2" cy="416.7" r="4.2" fill="#243b1c"/><circle cx="694.3" cy="395.3" r="4.4" fill="#243b1c"/><ellipse cx="740" cy="462" rx="12" ry="20" fill="#2a4322"/><circle cx="729.9" cy="456.6" r="4.9" fill="#2a4322"/><circle cx="744.3" cy="453.6" r="3.6" fill="#2a4322"/><circle cx="733.3" cy="475.8" r="5.3" fill="#2a4322"/><circle cx="743.5" cy="470.1" r="3.1" fill="#2a4322"/><circle cx="740.8" cy="475.3" r="4.2" fill="#2a4322"/><circle cx="739.6" cy="470.0" r="3.7" fill="#2a4322"/><circle cx="734.2" cy="472.4" r="5.3" fill="#2a4322"/><circle cx="737.0" cy="449.3" r="4.3" fill="#2a4322"/><circle cx="737.7" cy="454.3" r="5.1" fill="#2a4322"/><circle cx="742.0" cy="444.7" r="4.8" fill="#2a4322"/><ellipse cx="795" cy="454" rx="32" ry="28" fill="#2c4624"/><circle cx="779.6" cy="464.9" r="7.2" fill="#2c4624"/><circle cx="785.7" cy="444.9" r="6.9" fill="#2c4624"/><circle cx="799.0" cy="467.2" r="9.1" fill="#2c4624"/><circle cx="807.1" cy="457.6" r="7.6" fill="#2c4624"/><circle cx="810.4" cy="464.0" r="6.6" fill="#2c4624"/><circle cx="811.6" cy="439.3" r="7.6" fill="#2c4624"/><circle cx="794.7" cy="470.5" r="9.3" fill="#2c4624"/><circle cx="814.9" cy="470.9" r="14.3" fill="#2c4624"/><circle cx="774.2" cy="458.0" r="7.1" fill="#2c4624"/><circle cx="810.1" cy="463.9" r="8.5" fill="#2c4624"/><ellipse cx="798" cy="436" rx="18" ry="14" fill="#324f2a"/><circle cx="802.2" cy="430.0" r="3.7" fill="#324f2a"/><circle cx="809.8" cy="433.0" r="4.3" fill="#324f2a"/><circle cx="790.8" cy="434.5" r="6.0" fill="#324f2a"/><circle cx="813.6" cy="434.3" r="6.7" fill="#324f2a"/><circle cx="797.3" cy="444.4" r="4.4" fill="#324f2a"/><circle cx="799.7" cy="426.4" r="7.1" fill="#324f2a"/><circle cx="793.5" cy="442.4" r="7.3" fill="#324f2a"/><circle cx="813.6" cy="434.8" r="7.2" fill="#324f2a"/><circle cx="804.0" cy="425.7" r="4.6" fill="#324f2a"/><circle cx="787.3" cy="435.1" r="3.7" fill="#324f2a"/><ellipse cx="770" cy="468" rx="14" ry="14" fill="#2d4a26"/><circle cx="777.6" cy="469.4" r="3.7" fill="#2d4a26"/><circle cx="765.4" cy="455.9" r="4.4" fill="#2d4a26"/><circle cx="782.2" cy="462.9" r="6.1" fill="#2d4a26"/><circle cx="765.2" cy="473.5" r="3.6" fill="#2d4a26"/><circle cx="772.4" cy="474.8" r="5.0" fill="#2d4a26"/><circle cx="779.8" cy="460.9" r="4.5" fill="#2d4a26"/><circle cx="763.2" cy="458.4" r="3.1" fill="#2d4a26"/><circle cx="763.3" cy="457.3" r="5.5" fill="#2d4a26"/><circle cx="770.0" cy="458.7" r="3.4" fill="#2d4a26"/><circle cx="772.0" cy="460.1" r="5.6" fill="#2d4a26"/><ellipse cx="845" cy="470" rx="16" ry="12" fill="#34502c"/><circle cx="854.7" cy="468.7" r="4.8" fill="#34502c"/><circle cx="857.1" cy="466.8" r="3.9" fill="#34502c"/><circle cx="850.4" cy="474.2" r="6.8" fill="#34502c"/><circle cx="847.7" cy="464.6" r="6.5" fill="#34502c"/><circle cx="857.1" cy="468.8" r="4.6" fill="#34502c"/><circle cx="837.8" cy="468.3" r="3.3" fill="#34502c"/><circle cx="856.9" cy="468.3" r="5.3" fill="#34502c"/><circle cx="854.3" cy="466.9" r="6.7" fill="#34502c"/><circle cx="848.8" cy="464.5" r="4.2" fill="#34502c"/><circle cx="842.7" cy="476.2" r="5.5" fill="#34502c"/><ellipse cx="895" cy="460" rx="32" ry="24" fill="#2a4423"/><circle cx="893.8" cy="475.1" r="7.4" fill="#2a4423"/><circle cx="911.0" cy="452.3" r="10.1" fill="#2a4423"/><circle cx="870.1" cy="449.3" r="9.8" fill="#2a4423"/><circle cx="913.8" cy="451.9" r="10.7" fill="#2a4423"/><circle cx="882.0" cy="458.6" r="9.9" fill="#2a4423"/><circle cx="900.3" cy="468.8" r="12.8" fill="#2a4423"/><circle cx="904.9" cy="474.0" r="12.2" fill="#2a4423"/><circle cx="877.6" cy="455.2" r="10.5" fill="#2a4423"/><circle cx="870.0" cy="453.2" r="7.2" fill="#2a4423"/><circle cx="879.0" cy="455.3" r="8.6" fill="#2a4423"/><ellipse cx="912" cy="448" rx="14" ry="14" fill="#233a1d"/><circle cx="913.3" cy="438.6" r="4.8" fill="#233a1d"/><circle cx="912.8" cy="435.4" r="4.4" fill="#233a1d"/><circle cx="904.8" cy="441.8" r="4.6" fill="#233a1d"/><circle cx="908.8" cy="439.5" r="4.7" fill="#233a1d"/><circle cx="899.3" cy="449.8" r="5.2" fill="#233a1d"/><circle cx="921.2" cy="439.0" r="3.7" fill="#233a1d"/><circle cx="900.0" cy="443.3" r="5.7" fill="#233a1d"/><circle cx="916.3" cy="453.0" r="4.3" fill="#233a1d"/><circle cx="918.7" cy="451.3" r="3.1" fill="#233a1d"/><circle cx="906.3" cy="437.8" r="5.9" fill="#233a1d"/><ellipse cx="950" cy="471" rx="22" ry="12" fill="#34502c"/><circle cx="959.9" cy="478.9" r="8.0" fill="#34502c"/><circle cx="962.1" cy="479.3" r="9.7" fill="#34502c"/><circle cx="953.9" cy="481.9" r="6.6" fill="#34502c"/><circle cx="929.3" cy="471.9" r="9.0" fill="#34502c"/><circle cx="957.4" cy="477.5" r="7.2" fill="#34502c"/><circle cx="944.1" cy="476.2" r="6.2" fill="#34502c"/><circle cx="948.4" cy="466.1" r="7.4" fill="#34502c"/><circle cx="941.6" cy="472.8" r="6.2" fill="#34502c"/><circle cx="939.3" cy="465.3" r="4.8" fill="#34502c"/><circle cx="968.3" cy="470.0" r="9.7" fill="#34502c"/><ellipse cx="1005" cy="462" rx="32" ry="26" fill="#243d1f"/><circle cx="1018.8" cy="470.7" r="6.7" fill="#243d1f"/><circle cx="1008.1" cy="448.0" r="7.4" fill="#243d1f"/><circle cx="979.6" cy="473.0" r="13.0" fill="#243d1f"/><circle cx="1004.2" cy="474.5" r="13.8" fill="#243d1f"/><circle cx="982.3" cy="453.3" r="7.1" fill="#243d1f"/><circle cx="1028.3" cy="469.2" r="9.8" fill="#243d1f"/><circle cx="1031.3" cy="472.5" r="11.5" fill="#243d1f"/><circle cx="1009.5" cy="451.0" r="13.2" fill="#243d1f"/><circle cx="1030.6" cy="471.2" r="10.0" fill="#243d1f"/><circle cx="993.0" cy="477.5" r="13.8" fill="#243d1f"/><ellipse cx="1030" cy="452" rx="12" ry="30" fill="#2e4a27"/><circle cx="1029.4" cy="466.0" r="4.0" fill="#2e4a27"/><circle cx="1030.4" cy="465.8" r="2.9" fill="#2e4a27"/><circle cx="1035.8" cy="456.8" r="3.3" fill="#2e4a27"/><circle cx="1026.7" cy="475.1" r="3.3" fill="#2e4a27"/><circle cx="1024.0" cy="452.0" r="3.4" fill="#2e4a27"/><circle cx="1036.4" cy="453.8" r="2.4" fill="#2e4a27"/><circle cx="1029.1" cy="431.0" r="3.0" fill="#2e4a27"/><circle cx="1019.2" cy="456.4" r="2.7" fill="#2e4a27"/><circle cx="1033.2" cy="434.6" r="3.9" fill="#2e4a27"/><circle cx="1033.7" cy="436.0" r="3.9" fill="#2e4a27"/><path d="M897 242 L857 482 M897 242 L927 482" stroke="#5e5a55" stroke-width="2.0999999999999996" fill="none"/><path d="M897.0 242.0 L899.1 259.1 M897.0 242.0 L894.1 259.1" stroke="#5e5a55" stroke-width="1.0499999999999998" fill="none"/><path d="M894.1 259.1 L901.3 276.3 M899.1 259.1 L891.3 276.3" stroke="#c8c0b5" stroke-width="1.0499999999999998" fill="none"/><path d="M891.3 276.3 L901.3 276.3" stroke="#5e5a55" stroke-width="0.9799999999999999" fill="none"/><path d="M891.3 276.3 L903.4 293.4 M901.3 276.3 L888.4 293.4" stroke="#5e5a55" stroke-width="1.0499999999999998" fill="none"/><path d="M888.4 293.4 L905.6 310.6 M903.4 293.4 L885.6 310.6" stroke="#c8c0b5" stroke-width="1.0499999999999998" fill="none"/><path d="M885.6 310.6 L905.6 310.6" stroke="#5e5a55" stroke-width="0.9799999999999999" fill="none"/><path d="M885.6 310.6 L907.7 327.7 M905.6 310.6 L882.7 327.7" stroke="#5e5a55" stroke-width="1.0499999999999998" fill="none"/><path d="M882.7 327.7 L909.9 344.9 M907.7 327.7 L879.9 344.9" stroke="#c8c0b5" stroke-width="1.0499999999999998" fill="none"/><path d="M879.9 344.9 L909.9 344.9" stroke="#5e5a55" stroke-width="0.9799999999999999" fill="none"/><path d="M879.9 344.9 L912.0 362.0 M909.9 344.9 L877.0 362.0" stroke="#5e5a55" stroke-width="1.0499999999999998" fill="none"/><path d="M877.0 362.0 L914.1 379.1 M912.0 362.0 L874.1 379.1" stroke="#c8c0b5" stroke-width="1.0499999999999998" fill="none"/><path d="M874.1 379.1 L914.1 379.1" stroke="#5e5a55" stroke-width="0.9799999999999999" fill="none"/><path d="M874.1 379.1 L916.3 396.3 M914.1 379.1 L871.3 396.3" stroke="#5e5a55" stroke-width="1.0499999999999998" fill="none"/><path d="M871.3 396.3 L918.4 413.4 M916.3 396.3 L868.4 413.4" stroke="#c8c0b5" stroke-width="1.0499999999999998" fill="none"/><path d="M868.4 413.4 L918.4 413.4" stroke="#5e5a55" stroke-width="0.9799999999999999" fill="none"/><path d="M868.4 413.4 L920.6 430.6 M918.4 413.4 L865.6 430.6" stroke="#5e5a55" stroke-width="1.0499999999999998" fill="none"/><path d="M865.6 430.6 L922.7 447.7 M920.6 430.6 L862.7 447.7" stroke="#c8c0b5" stroke-width="1.0499999999999998" fill="none"/><path d="M862.7 447.7 L922.7 447.7" stroke="#5e5a55" stroke-width="0.9799999999999999" fill="none"/><path d="M862.7 447.7 L924.9 464.9 M922.7 447.7 L859.9 464.9" stroke="#5e5a55" stroke-width="1.0499999999999998" fill="none"/><path d="M859.9 464.9 L927.0 482.0 M924.9 464.9 L857.0 482.0" stroke="#c8c0b5" stroke-width="1.0499999999999998" fill="none"/><path d="M857.0 482.0 L927.0 482.0" stroke="#5e5a55" stroke-width="0.9799999999999999" fill="none"/><path d="M897 242 L887.5 482 M897 242 L901.5 482" stroke="#c8c0b5" stroke-width="0.84" fill="none"/><path d="M888.2 292.0 L857 302 L888.2 305 M905.8 292.0 L952 302 L905.8 305" stroke="#5e5a55" stroke-width="1.4" fill="none"/><path d="M883.0 293.7 L880.4 304.4 M913.5 293.7 L917.3 304.4 M877.8 295.3 L875.2 304.0 M921.2 295.3 L925.0 304.0 M872.6 297.0 L870.0 303.5 M928.9 297.0 L932.7 303.5 M867.4 298.7 L864.8 303.1 M936.6 298.7 L940.4 303.1 M862.2 300.3 L859.6 302.7 M944.3 300.3 L948.1 302.7 " stroke="#c8c0b5" stroke-width="0.84" fill="none"/><path d="M860 303 q-4 18 3 19 q7 0 6-12 M949 303 q4 18 -3 19 q-7 0 -6-12" stroke="#556070" stroke-width="0.8" fill="none"/><path d="M880.1 348.0 L828 358 L880.1 361 M913.9 348.0 L979 358 L913.9 361" stroke="#5e5a55" stroke-width="1.4" fill="none"/><path d="M871.4 349.7 L867.1 360.4 M924.8 349.7 L930.2 360.4 M862.7 351.3 L858.4 360.0 M935.6 351.3 L941.0 360.0 M854.0 353.0 L849.7 359.5 M946.5 353.0 L951.9 359.5 M845.4 354.7 L841.0 359.1 M957.3 354.7 L962.7 359.1 M836.7 356.3 L832.3 358.7 M968.2 356.3 L973.6 358.7 " stroke="#c8c0b5" stroke-width="0.84" fill="none"/><path d="M831 359 q-4 18 3 19 q7 0 6-12 M976 359 q4 18 -3 19 q-7 0 -6-12" stroke="#556070" stroke-width="0.8" fill="none"/><path d="M872.8 398.0 L844 408 L872.8 411 M921.2 398.0 L962 408 L921.2 411" stroke="#5e5a55" stroke-width="1.4" fill="none"/><path d="M868.0 399.7 L865.6 410.4 M928.0 399.7 L931.4 410.4 M863.2 401.3 L860.8 410.0 M934.8 401.3 L938.2 410.0 M858.4 403.0 L856.0 409.5 M941.6 403.0 L945.0 409.5 M853.6 404.7 L851.2 409.1 M948.4 404.7 L951.8 409.1 M848.8 406.3 L846.4 408.7 M955.2 406.3 L958.6 408.7 " stroke="#c8c0b5" stroke-width="0.84" fill="none"/><path d="M847 409 q-4 18 3 19 q7 0 6-12 M959 409 q4 18 -3 19 q-7 0 -6-12" stroke="#556070" stroke-width="0.8" fill="none"/><rect x="680" y="479" width="360" height="85" filter="url(#ftex)"/><rect x="680" y="479" width="360" height="6" fill="#2a4020" opacity="0.45"/><rect x="680" y="552" width="360" height="12" fill="#7a8a55" opacity="0.35"/><rect x="714" y="483" width="68" height="71" fill="url(#tsky)"/><g transform="translate(714,483) scale(0.19) translate(-680,-184)"><path d="M680 197 Q760 300 850 418 M700 184 Q780 290 828 360 M1040 190 Q1000 270 978 360 M1040 215 Q1000 300 961 410" stroke="#8a8a8a" stroke-width="5" fill="none"/><path d="M736 308 L716 482 M736 308 L749 482" stroke="#9a9a9a" stroke-width="5.7" fill="none"/><path d="M736.0 308.0 L736.9 320.4 M736.0 308.0 L734.6 320.4" stroke="#9a9a9a" stroke-width="3.75" fill="none"/><path d="M734.6 320.4 L737.9 332.9 M736.9 320.4 L733.1 332.9" stroke="#9a9a9a" stroke-width="3.75" fill="none"/><path d="M733.1 332.9 L737.9 332.9" stroke="#9a9a9a" stroke-width="3.5" fill="none"/><path d="M733.1 332.9 L738.8 345.3 M737.9 332.9 L731.7 345.3" stroke="#9a9a9a" stroke-width="3.75" fill="none"/><path d="M731.7 345.3 L739.7 357.7 M738.8 345.3 L730.3 357.7" stroke="#9a9a9a" stroke-width="3.75" fill="none"/><path d="M730.3 357.7 L739.7 357.7" stroke="#9a9a9a" stroke-width="3.5" fill="none"/><path d="M730.3 357.7 L740.6 370.1 M739.7 357.7 L728.9 370.1" stroke="#9a9a9a" stroke-width="3.75" fill="none"/><path d="M728.9 370.1 L741.6 382.6 M740.6 370.1 L727.4 382.6" stroke="#9a9a9a" stroke-width="3.75" fill="none"/><path d="M727.4 382.6 L741.6 382.6" stroke="#9a9a9a" stroke-width="3.5" fill="none"/><path d="M727.4 382.6 L742.5 395.0 M741.6 382.6 L726.0 395.0" stroke="#9a9a9a" stroke-width="3.75" fill="none"/><path d="M726.0 395.0 L743.4 407.4 M742.5 395.0 L724.6 407.4" stroke="#9a9a9a" stroke-width="3.75" fill="none"/><path d="M724.6 407.4 L743.4 407.4" stroke="#9a9a9a" stroke-width="3.5" fill="none"/><path d="M724.6 407.4 L744.4 419.9 M743.4 407.4 L723.1 419.9" stroke="#9a9a9a" stroke-width="3.75" fill="none"/><path d="M723.1 419.9 L745.3 432.3 M744.4 419.9 L721.7 432.3" stroke="#9a9a9a" stroke-width="3.75" fill="none"/><path d="M721.7 432.3 L745.3 432.3" stroke="#9a9a9a" stroke-width="3.5" fill="none"/><path d="M721.7 432.3 L746.2 444.7 M745.3 432.3 L720.3 444.7" stroke="#9a9a9a" stroke-width="3.75" fill="none"/><path d="M720.3 444.7 L747.1 457.1 M746.2 444.7 L718.9 457.1" stroke="#9a9a9a" stroke-width="3.75" fill="none"/><path d="M718.9 457.1 L747.1 457.1" stroke="#9a9a9a" stroke-width="3.5" fill="none"/><path d="M718.9 457.1 L748.1 469.6 M747.1 457.1 L717.4 469.6" stroke="#9a9a9a" stroke-width="3.75" fill="none"/><path d="M717.4 469.6 L749.0 482.0 M748.1 469.6 L716.0 482.0" stroke="#9a9a9a" stroke-width="3.75" fill="none"/><path d="M716.0 482.0 L749.0 482.0" stroke="#9a9a9a" stroke-width="3.5" fill="none"/><path d="M736 308 L731.0 482 M736 308 L737.5 482" stroke="#9a9a9a" stroke-width="3.0" fill="none"/><path d="M732.7 333.0 L709 343 L732.7 346 M739.3 333.0 L761 343 L739.3 346" stroke="#9a9a9a" stroke-width="5" fill="none"/><path d="M728.7 334.7 L726.8 345.4 M742.9 334.7 L744.7 345.4 M724.8 336.3 L722.8 345.0 M746.5 336.3 L748.4 345.0 M720.8 338.0 L718.9 344.5 M750.2 338.0 L752.0 344.5 M716.9 339.7 L714.9 344.1 M753.8 339.7 L755.6 344.1 M712.9 341.3 L711.0 343.7 M757.4 341.3 L759.2 343.7 " stroke="#9a9a9a" stroke-width="3.0" fill="none"/><path d="M712 344 q-4 18 3 19 q7 0 6-12 M758 344 q4 18 -3 19 q-7 0 -6-12" stroke="#556070" stroke-width="0.8" fill="none"/><path d="M730.3 358.0 L703 368 L730.3 371 M741.7 358.0 L767 368 L741.7 371" stroke="#9a9a9a" stroke-width="5" fill="none"/><path d="M725.8 359.7 L723.5 370.4 M745.9 359.7 L748.0 370.4 M721.2 361.3 L718.9 370.0 M750.1 361.3 L752.2 370.0 M716.7 363.0 L714.4 369.5 M754.3 363.0 L756.5 369.5 M712.1 364.7 L709.8 369.1 M758.6 364.7 L760.7 369.1 M707.6 366.3 L705.3 368.7 M762.8 366.3 L764.9 368.7 " stroke="#9a9a9a" stroke-width="3.0" fill="none"/><path d="M706 369 q-4 18 3 19 q7 0 6-12 M764 369 q4 18 -3 19 q-7 0 -6-12" stroke="#556070" stroke-width="0.8" fill="none"/><path d="M897 242 L857 482 M897 242 L927 482" stroke="#858585" stroke-width="5.7" fill="none"/><path d="M897.0 242.0 L899.1 259.1 M897.0 242.0 L894.1 259.1" stroke="#858585" stroke-width="3.75" fill="none"/><path d="M894.1 259.1 L901.3 276.3 M899.1 259.1 L891.3 276.3" stroke="#858585" stroke-width="3.75" fill="none"/><path d="M891.3 276.3 L901.3 276.3" stroke="#858585" stroke-width="3.5" fill="none"/><path d="M891.3 276.3 L903.4 293.4 M901.3 276.3 L888.4 293.4" stroke="#858585" stroke-width="3.75" fill="none"/><path d="M888.4 293.4 L905.6 310.6 M903.4 293.4 L885.6 310.6" stroke="#858585" stroke-width="3.75" fill="none"/><path d="M885.6 310.6 L905.6 310.6" stroke="#858585" stroke-width="3.5" fill="none"/><path d="M885.6 310.6 L907.7 327.7 M905.6 310.6 L882.7 327.7" stroke="#858585" stroke-width="3.75" fill="none"/><path d="M882.7 327.7 L909.9 344.9 M907.7 327.7 L879.9 344.9" stroke="#858585" stroke-width="3.75" fill="none"/><path d="M879.9 344.9 L909.9 344.9" stroke="#858585" stroke-width="3.5" fill="none"/><path d="M879.9 344.9 L912.0 362.0 M909.9 344.9 L877.0 362.0" stroke="#858585" stroke-width="3.75" fill="none"/><path d="M877.0 362.0 L914.1 379.1 M912.0 362.0 L874.1 379.1" stroke="#858585" stroke-width="3.75" fill="none"/><path d="M874.1 379.1 L914.1 379.1" stroke="#858585" stroke-width="3.5" fill="none"/><path d="M874.1 379.1 L916.3 396.3 M914.1 379.1 L871.3 396.3" stroke="#858585" stroke-width="3.75" fill="none"/><path d="M871.3 396.3 L918.4 413.4 M916.3 396.3 L868.4 413.4" stroke="#858585" stroke-width="3.75" fill="none"/><path d="M868.4 413.4 L918.4 413.4" stroke="#858585" stroke-width="3.5" fill="none"/><path d="M868.4 413.4 L920.6 430.6 M918.4 413.4 L865.6 430.6" stroke="#858585" stroke-width="3.75" fill="none"/><path d="M865.6 430.6 L922.7 447.7 M920.6 430.6 L862.7 447.7" stroke="#858585" stroke-width="3.75" fill="none"/><path d="M862.7 447.7 L922.7 447.7" stroke="#858585" stroke-width="3.5" fill="none"/><path d="M862.7 447.7 L924.9 464.9 M922.7 447.7 L859.9 464.9" stroke="#858585" stroke-width="3.75" fill="none"/><path d="M859.9 464.9 L927.0 482.0 M924.9 464.9 L857.0 482.0" stroke="#858585" stroke-width="3.75" fill="none"/><path d="M857.0 482.0 L927.0 482.0" stroke="#858585" stroke-width="3.5" fill="none"/><path d="M897 242 L887.5 482 M897 242 L901.5 482" stroke="#858585" stroke-width="3.0" fill="none"/><path d="M888.2 292.0 L857 302 L888.2 305 M905.8 292.0 L952 302 L905.8 305" stroke="#858585" stroke-width="5" fill="none"/><path d="M883.0 293.7 L880.4 304.4 M913.5 293.7 L917.3 304.4 M877.8 295.3 L875.2 304.0 M921.2 295.3 L925.0 304.0 M872.6 297.0 L870.0 303.5 M928.9 297.0 L932.7 303.5 M867.4 298.7 L864.8 303.1 M936.6 298.7 L940.4 303.1 M862.2 300.3 L859.6 302.7 M944.3 300.3 L948.1 302.7 " stroke="#858585" stroke-width="3.0" fill="none"/><path d="M860 303 q-4 18 3 19 q7 0 6-12 M949 303 q4 18 -3 19 q-7 0 -6-12" stroke="#556070" stroke-width="0.8" fill="none"/><path d="M880.1 348.0 L828 358 L880.1 361 M913.9 348.0 L979 358 L913.9 361" stroke="#858585" stroke-width="5" fill="none"/><path d="M871.4 349.7 L867.1 360.4 M924.8 349.7 L930.2 360.4 M862.7 351.3 L858.4 360.0 M935.6 351.3 L941.0 360.0 M854.0 353.0 L849.7 359.5 M946.5 353.0 L951.9 359.5 M845.4 354.7 L841.0 359.1 M957.3 354.7 L962.7 359.1 M836.7 356.3 L832.3 358.7 M968.2 356.3 L973.6 358.7 " stroke="#858585" stroke-width="3.0" fill="none"/><path d="M831 359 q-4 18 3 19 q7 0 6-12 M976 359 q4 18 -3 19 q-7 0 -6-12" stroke="#556070" stroke-width="0.8" fill="none"/><path d="M872.8 398.0 L844 408 L872.8 411 M921.2 398.0 L962 408 L921.2 411" stroke="#858585" stroke-width="5" fill="none"/><path d="M868.0 399.7 L865.6 410.4 M928.0 399.7 L931.4 410.4 M863.2 401.3 L860.8 410.0 M934.8 401.3 L938.2 410.0 M858.4 403.0 L856.0 409.5 M941.6 403.0 L945.0 409.5 M853.6 404.7 L851.2 409.1 M948.4 404.7 L951.8 409.1 M848.8 406.3 L846.4 408.7 M955.2 406.3 L958.6 408.7 " stroke="#858585" stroke-width="3.0" fill="none"/><path d="M847 409 q-4 18 3 19 q7 0 6-12 M959 409 q4 18 -3 19 q-7 0 -6-12" stroke="#556070" stroke-width="0.8" fill="none"/></g><ellipse cx="720" cy="531" rx="5" ry="7" fill="#3a3a3a"/><ellipse cx="736" cy="534" rx="4" ry="3.5" fill="#3a3a3a"/><ellipse cx="747" cy="536" rx="2.5" ry="2" fill="#3a3a3a"/><ellipse cx="755" cy="535" rx="3.5" ry="3" fill="#3a3a3a"/><ellipse cx="764" cy="536.5" rx="2.5" ry="1.8" fill="#3a3a3a"/><ellipse cx="774.5" cy="535.5" rx="4.5" ry="3.5" fill="#3a3a3a"/><rect x="714" y="536" width="68" height="3" fill="#4a4a4a"/><rect x="714" y="539" width="68" height="15" filter="url(#gtex)"/><rect x="789" y="483" width="68" height="71" fill="url(#tsky)"/><g transform="translate(789,483) scale(0.19) translate(-680,-184)"><path d="M680 197 Q760 300 850 418 M700 184 Q780 290 828 360 M1040 190 Q1000 270 978 360 M1040 215 Q1000 300 961 410" stroke="#8a8a8a" stroke-width="5" fill="none"/><path d="M736 308 L716 482 M736 308 L749 482" stroke="#9a9a9a" stroke-width="5.7" fill="none"/><path d="M736.0 308.0 L736.9 320.4 M736.0 308.0 L734.6 320.4" stroke="#9a9a9a" stroke-width="3.75" fill="none"/><path d="M734.6 320.4 L737.9 332.9 M736.9 320.4 L733.1 332.9" stroke="#9a9a9a" stroke-width="3.75" fill="none"/><path d="M733.1 332.9 L737.9 332.9" stroke="#9a9a9a" stroke-width="3.5" fill="none"/><path d="M733.1 332.9 L738.8 345.3 M737.9 332.9 L731.7 345.3" stroke="#9a9a9a" stroke-width="3.75" fill="none"/><path d="M731.7 345.3 L739.7 357.7 M738.8 345.3 L730.3 357.7" stroke="#9a9a9a" stroke-width="3.75" fill="none"/><path d="M730.3 357.7 L739.7 357.7" stroke="#9a9a9a" stroke-width="3.5" fill="none"/><path d="M730.3 357.7 L740.6 370.1 M739.7 357.7 L728.9 370.1" stroke="#9a9a9a" stroke-width="3.75" fill="none"/><path d="M728.9 370.1 L741.6 382.6 M740.6 370.1 L727.4 382.6" stroke="#9a9a9a" stroke-width="3.75" fill="none"/><path d="M727.4 382.6 L741.6 382.6" stroke="#9a9a9a" stroke-width="3.5" fill="none"/><path d="M727.4 382.6 L742.5 395.0 M741.6 382.6 L726.0 395.0" stroke="#9a9a9a" stroke-width="3.75" fill="none"/><path d="M726.0 395.0 L743.4 407.4 M742.5 395.0 L724.6 407.4" stroke="#9a9a9a" stroke-width="3.75" fill="none"/><path d="M724.6 407.4 L743.4 407.4" stroke="#9a9a9a" stroke-width="3.5" fill="none"/><path d="M724.6 407.4 L744.4 419.9 M743.4 407.4 L723.1 419.9" stroke="#9a9a9a" stroke-width="3.75" fill="none"/><path d="M723.1 419.9 L745.3 432.3 M744.4 419.9 L721.7 432.3" stroke="#9a9a9a" stroke-width="3.75" fill="none"/><path d="M721.7 432.3 L745.3 432.3" stroke="#9a9a9a" stroke-width="3.5" fill="none"/><path d="M721.7 432.3 L746.2 444.7 M745.3 432.3 L720.3 444.7" stroke="#9a9a9a" stroke-width="3.75" fill="none"/><path d="M720.3 444.7 L747.1 457.1 M746.2 444.7 L718.9 457.1" stroke="#9a9a9a" stroke-width="3.75" fill="none"/><path d="M718.9 457.1 L747.1 457.1" stroke="#9a9a9a" stroke-width="3.5" fill="none"/><path d="M718.9 457.1 L748.1 469.6 M747.1 457.1 L717.4 469.6" stroke="#9a9a9a" stroke-width="3.75" fill="none"/><path d="M717.4 469.6 L749.0 482.0 M748.1 469.6 L716.0 482.0" stroke="#9a9a9a" stroke-width="3.75" fill="none"/><path d="M716.0 482.0 L749.0 482.0" stroke="#9a9a9a" stroke-width="3.5" fill="none"/><path d="M736 308 L731.0 482 M736 308 L737.5 482" stroke="#9a9a9a" stroke-width="3.0" fill="none"/><path d="M732.7 333.0 L709 343 L732.7 346 M739.3 333.0 L761 343 L739.3 346" stroke="#9a9a9a" stroke-width="5" fill="none"/><path d="M728.7 334.7 L726.8 345.4 M742.9 334.7 L744.7 345.4 M724.8 336.3 L722.8 345.0 M746.5 336.3 L748.4 345.0 M720.8 338.0 L718.9 344.5 M750.2 338.0 L752.0 344.5 M716.9 339.7 L714.9 344.1 M753.8 339.7 L755.6 344.1 M712.9 341.3 L711.0 343.7 M757.4 341.3 L759.2 343.7 " stroke="#9a9a9a" stroke-width="3.0" fill="none"/><path d="M712 344 q-4 18 3 19 q7 0 6-12 M758 344 q4 18 -3 19 q-7 0 -6-12" stroke="#556070" stroke-width="0.8" fill="none"/><path d="M730.3 358.0 L703 368 L730.3 371 M741.7 358.0 L767 368 L741.7 371" stroke="#9a9a9a" stroke-width="5" fill="none"/><path d="M725.8 359.7 L723.5 370.4 M745.9 359.7 L748.0 370.4 M721.2 361.3 L718.9 370.0 M750.1 361.3 L752.2 370.0 M716.7 363.0 L714.4 369.5 M754.3 363.0 L756.5 369.5 M712.1 364.7 L709.8 369.1 M758.6 364.7 L760.7 369.1 M707.6 366.3 L705.3 368.7 M762.8 366.3 L764.9 368.7 " stroke="#9a9a9a" stroke-width="3.0" fill="none"/><path d="M706 369 q-4 18 3 19 q7 0 6-12 M764 369 q4 18 -3 19 q-7 0 -6-12" stroke="#556070" stroke-width="0.8" fill="none"/><path d="M897 242 L857 482 M897 242 L927 482" stroke="#858585" stroke-width="5.7" fill="none"/><path d="M897.0 242.0 L899.1 259.1 M897.0 242.0 L894.1 259.1" stroke="#858585" stroke-width="3.75" fill="none"/><path d="M894.1 259.1 L901.3 276.3 M899.1 259.1 L891.3 276.3" stroke="#858585" stroke-width="3.75" fill="none"/><path d="M891.3 276.3 L901.3 276.3" stroke="#858585" stroke-width="3.5" fill="none"/><path d="M891.3 276.3 L903.4 293.4 M901.3 276.3 L888.4 293.4" stroke="#858585" stroke-width="3.75" fill="none"/><path d="M888.4 293.4 L905.6 310.6 M903.4 293.4 L885.6 310.6" stroke="#858585" stroke-width="3.75" fill="none"/><path d="M885.6 310.6 L905.6 310.6" stroke="#858585" stroke-width="3.5" fill="none"/><path d="M885.6 310.6 L907.7 327.7 M905.6 310.6 L882.7 327.7" stroke="#858585" stroke-width="3.75" fill="none"/><path d="M882.7 327.7 L909.9 344.9 M907.7 327.7 L879.9 344.9" stroke="#858585" stroke-width="3.75" fill="none"/><path d="M879.9 344.9 L909.9 344.9" stroke="#858585" stroke-width="3.5" fill="none"/><path d="M879.9 344.9 L912.0 362.0 M909.9 344.9 L877.0 362.0" stroke="#858585" stroke-width="3.75" fill="none"/><path d="M877.0 362.0 L914.1 379.1 M912.0 362.0 L874.1 379.1" stroke="#858585" stroke-width="3.75" fill="none"/><path d="M874.1 379.1 L914.1 379.1" stroke="#858585" stroke-width="3.5" fill="none"/><path d="M874.1 379.1 L916.3 396.3 M914.1 379.1 L871.3 396.3" stroke="#858585" stroke-width="3.75" fill="none"/><path d="M871.3 396.3 L918.4 413.4 M916.3 396.3 L868.4 413.4" stroke="#858585" stroke-width="3.75" fill="none"/><path d="M868.4 413.4 L918.4 413.4" stroke="#858585" stroke-width="3.5" fill="none"/><path d="M868.4 413.4 L920.6 430.6 M918.4 413.4 L865.6 430.6" stroke="#858585" stroke-width="3.75" fill="none"/><path d="M865.6 430.6 L922.7 447.7 M920.6 430.6 L862.7 447.7" stroke="#858585" stroke-width="3.75" fill="none"/><path d="M862.7 447.7 L922.7 447.7" stroke="#858585" stroke-width="3.5" fill="none"/><path d="M862.7 447.7 L924.9 464.9 M922.7 447.7 L859.9 464.9" stroke="#858585" stroke-width="3.75" fill="none"/><path d="M859.9 464.9 L927.0 482.0 M924.9 464.9 L857.0 482.0" stroke="#858585" stroke-width="3.75" fill="none"/><path d="M857.0 482.0 L927.0 482.0" stroke="#858585" stroke-width="3.5" fill="none"/><path d="M897 242 L887.5 482 M897 242 L901.5 482" stroke="#858585" stroke-width="3.0" fill="none"/><path d="M888.2 292.0 L857 302 L888.2 305 M905.8 292.0 L952 302 L905.8 305" stroke="#858585" stroke-width="5" fill="none"/><path d="M883.0 293.7 L880.4 304.4 M913.5 293.7 L917.3 304.4 M877.8 295.3 L875.2 304.0 M921.2 295.3 L925.0 304.0 M872.6 297.0 L870.0 303.5 M928.9 297.0 L932.7 303.5 M867.4 298.7 L864.8 303.1 M936.6 298.7 L940.4 303.1 M862.2 300.3 L859.6 302.7 M944.3 300.3 L948.1 302.7 " stroke="#858585" stroke-width="3.0" fill="none"/><path d="M860 303 q-4 18 3 19 q7 0 6-12 M949 303 q4 18 -3 19 q-7 0 -6-12" stroke="#556070" stroke-width="0.8" fill="none"/><path d="M880.1 348.0 L828 358 L880.1 361 M913.9 348.0 L979 358 L913.9 361" stroke="#858585" stroke-width="5" fill="none"/><path d="M871.4 349.7 L867.1 360.4 M924.8 349.7 L930.2 360.4 M862.7 351.3 L858.4 360.0 M935.6 351.3 L941.0 360.0 M854.0 353.0 L849.7 359.5 M946.5 353.0 L951.9 359.5 M845.4 354.7 L841.0 359.1 M957.3 354.7 L962.7 359.1 M836.7 356.3 L832.3 358.7 M968.2 356.3 L973.6 358.7 " stroke="#858585" stroke-width="3.0" fill="none"/><path d="M831 359 q-4 18 3 19 q7 0 6-12 M976 359 q4 18 -3 19 q-7 0 -6-12" stroke="#556070" stroke-width="0.8" fill="none"/><path d="M872.8 398.0 L844 408 L872.8 411 M921.2 398.0 L962 408 L921.2 411" stroke="#858585" stroke-width="5" fill="none"/><path d="M868.0 399.7 L865.6 410.4 M928.0 399.7 L931.4 410.4 M863.2 401.3 L860.8 410.0 M934.8 401.3 L938.2 410.0 M858.4 403.0 L856.0 409.5 M941.6 403.0 L945.0 409.5 M853.6 404.7 L851.2 409.1 M948.4 404.7 L951.8 409.1 M848.8 406.3 L846.4 408.7 M955.2 406.3 L958.6 408.7 " stroke="#858585" stroke-width="3.0" fill="none"/><path d="M847 409 q-4 18 3 19 q7 0 6-12 M959 409 q4 18 -3 19 q-7 0 -6-12" stroke="#556070" stroke-width="0.8" fill="none"/></g><ellipse cx="795" cy="531" rx="5" ry="7" fill="#3a3a3a"/><ellipse cx="811" cy="534" rx="4" ry="3.5" fill="#3a3a3a"/><ellipse cx="822" cy="536" rx="2.5" ry="2" fill="#3a3a3a"/><ellipse cx="830" cy="535" rx="3.5" ry="3" fill="#3a3a3a"/><ellipse cx="839" cy="536.5" rx="2.5" ry="1.8" fill="#3a3a3a"/><ellipse cx="849.5" cy="535.5" rx="4.5" ry="3.5" fill="#3a3a3a"/><rect x="789" y="536" width="68" height="3" fill="#4a4a4a"/><rect x="789" y="539" width="68" height="15" filter="url(#gtex)"/><rect x="865" y="483" width="68" height="71" fill="url(#tsky)"/><g transform="translate(865,483) scale(0.19) translate(-680,-184)"><path d="M680 197 Q760 300 850 418 M700 184 Q780 290 828 360 M1040 190 Q1000 270 978 360 M1040 215 Q1000 300 961 410" stroke="#8a8a8a" stroke-width="5" fill="none"/><path d="M736 308 L716 482 M736 308 L749 482" stroke="#9a9a9a" stroke-width="5.7" fill="none"/><path d="M736.0 308.0 L736.9 320.4 M736.0 308.0 L734.6 320.4" stroke="#9a9a9a" stroke-width="3.75" fill="none"/><path d="M734.6 320.4 L737.9 332.9 M736.9 320.4 L733.1 332.9" stroke="#9a9a9a" stroke-width="3.75" fill="none"/><path d="M733.1 332.9 L737.9 332.9" stroke="#9a9a9a" stroke-width="3.5" fill="none"/><path d="M733.1 332.9 L738.8 345.3 M737.9 332.9 L731.7 345.3" stroke="#9a9a9a" stroke-width="3.75" fill="none"/><path d="M731.7 345.3 L739.7 357.7 M738.8 345.3 L730.3 357.7" stroke="#9a9a9a" stroke-width="3.75" fill="none"/><path d="M730.3 357.7 L739.7 357.7" stroke="#9a9a9a" stroke-width="3.5" fill="none"/><path d="M730.3 357.7 L740.6 370.1 M739.7 357.7 L728.9 370.1" stroke="#9a9a9a" stroke-width="3.75" fill="none"/><path d="M728.9 370.1 L741.6 382.6 M740.6 370.1 L727.4 382.6" stroke="#9a9a9a" stroke-width="3.75" fill="none"/><path d="M727.4 382.6 L741.6 382.6" stroke="#9a9a9a" stroke-width="3.5" fill="none"/><path d="M727.4 382.6 L742.5 395.0 M741.6 382.6 L726.0 395.0" stroke="#9a9a9a" stroke-width="3.75" fill="none"/><path d="M726.0 395.0 L743.4 407.4 M742.5 395.0 L724.6 407.4" stroke="#9a9a9a" stroke-width="3.75" fill="none"/><path d="M724.6 407.4 L743.4 407.4" stroke="#9a9a9a" stroke-width="3.5" fill="none"/><path d="M724.6 407.4 L744.4 419.9 M743.4 407.4 L723.1 419.9" stroke="#9a9a9a" stroke-width="3.75" fill="none"/><path d="M723.1 419.9 L745.3 432.3 M744.4 419.9 L721.7 432.3" stroke="#9a9a9a" stroke-width="3.75" fill="none"/><path d="M721.7 432.3 L745.3 432.3" stroke="#9a9a9a" stroke-width="3.5" fill="none"/><path d="M721.7 432.3 L746.2 444.7 M745.3 432.3 L720.3 444.7" stroke="#9a9a9a" stroke-width="3.75" fill="none"/><path d="M720.3 444.7 L747.1 457.1 M746.2 444.7 L718.9 457.1" stroke="#9a9a9a" stroke-width="3.75" fill="none"/><path d="M718.9 457.1 L747.1 457.1" stroke="#9a9a9a" stroke-width="3.5" fill="none"/><path d="M718.9 457.1 L748.1 469.6 M747.1 457.1 L717.4 469.6" stroke="#9a9a9a" stroke-width="3.75" fill="none"/><path d="M717.4 469.6 L749.0 482.0 M748.1 469.6 L716.0 482.0" stroke="#9a9a9a" stroke-width="3.75" fill="none"/><path d="M716.0 482.0 L749.0 482.0" stroke="#9a9a9a" stroke-width="3.5" fill="none"/><path d="M736 308 L731.0 482 M736 308 L737.5 482" stroke="#9a9a9a" stroke-width="3.0" fill="none"/><path d="M732.7 333.0 L709 343 L732.7 346 M739.3 333.0 L761 343 L739.3 346" stroke="#9a9a9a" stroke-width="5" fill="none"/><path d="M728.7 334.7 L726.8 345.4 M742.9 334.7 L744.7 345.4 M724.8 336.3 L722.8 345.0 M746.5 336.3 L748.4 345.0 M720.8 338.0 L718.9 344.5 M750.2 338.0 L752.0 344.5 M716.9 339.7 L714.9 344.1 M753.8 339.7 L755.6 344.1 M712.9 341.3 L711.0 343.7 M757.4 341.3 L759.2 343.7 " stroke="#9a9a9a" stroke-width="3.0" fill="none"/><path d="M712 344 q-4 18 3 19 q7 0 6-12 M758 344 q4 18 -3 19 q-7 0 -6-12" stroke="#556070" stroke-width="0.8" fill="none"/><path d="M730.3 358.0 L703 368 L730.3 371 M741.7 358.0 L767 368 L741.7 371" stroke="#9a9a9a" stroke-width="5" fill="none"/><path d="M725.8 359.7 L723.5 370.4 M745.9 359.7 L748.0 370.4 M721.2 361.3 L718.9 370.0 M750.1 361.3 L752.2 370.0 M716.7 363.0 L714.4 369.5 M754.3 363.0 L756.5 369.5 M712.1 364.7 L709.8 369.1 M758.6 364.7 L760.7 369.1 M707.6 366.3 L705.3 368.7 M762.8 366.3 L764.9 368.7 " stroke="#9a9a9a" stroke-width="3.0" fill="none"/><path d="M706 369 q-4 18 3 19 q7 0 6-12 M764 369 q4 18 -3 19 q-7 0 -6-12" stroke="#556070" stroke-width="0.8" fill="none"/><path d="M897 242 L857 482 M897 242 L927 482" stroke="#858585" stroke-width="5.7" fill="none"/><path d="M897.0 242.0 L899.1 259.1 M897.0 242.0 L894.1 259.1" stroke="#858585" stroke-width="3.75" fill="none"/><path d="M894.1 259.1 L901.3 276.3 M899.1 259.1 L891.3 276.3" stroke="#858585" stroke-width="3.75" fill="none"/><path d="M891.3 276.3 L901.3 276.3" stroke="#858585" stroke-width="3.5" fill="none"/><path d="M891.3 276.3 L903.4 293.4 M901.3 276.3 L888.4 293.4" stroke="#858585" stroke-width="3.75" fill="none"/><path d="M888.4 293.4 L905.6 310.6 M903.4 293.4 L885.6 310.6" stroke="#858585" stroke-width="3.75" fill="none"/><path d="M885.6 310.6 L905.6 310.6" stroke="#858585" stroke-width="3.5" fill="none"/><path d="M885.6 310.6 L907.7 327.7 M905.6 310.6 L882.7 327.7" stroke="#858585" stroke-width="3.75" fill="none"/><path d="M882.7 327.7 L909.9 344.9 M907.7 327.7 L879.9 344.9" stroke="#858585" stroke-width="3.75" fill="none"/><path d="M879.9 344.9 L909.9 344.9" stroke="#858585" stroke-width="3.5" fill="none"/><path d="M879.9 344.9 L912.0 362.0 M909.9 344.9 L877.0 362.0" stroke="#858585" stroke-width="3.75" fill="none"/><path d="M877.0 362.0 L914.1 379.1 M912.0 362.0 L874.1 379.1" stroke="#858585" stroke-width="3.75" fill="none"/><path d="M874.1 379.1 L914.1 379.1" stroke="#858585" stroke-width="3.5" fill="none"/><path d="M874.1 379.1 L916.3 396.3 M914.1 379.1 L871.3 396.3" stroke="#858585" stroke-width="3.75" fill="none"/><path d="M871.3 396.3 L918.4 413.4 M916.3 396.3 L868.4 413.4" stroke="#858585" stroke-width="3.75" fill="none"/><path d="M868.4 413.4 L918.4 413.4" stroke="#858585" stroke-width="3.5" fill="none"/><path d="M868.4 413.4 L920.6 430.6 M918.4 413.4 L865.6 430.6" stroke="#858585" stroke-width="3.75" fill="none"/><path d="M865.6 430.6 L922.7 447.7 M920.6 430.6 L862.7 447.7" stroke="#858585" stroke-width="3.75" fill="none"/><path d="M862.7 447.7 L922.7 447.7" stroke="#858585" stroke-width="3.5" fill="none"/><path d="M862.7 447.7 L924.9 464.9 M922.7 447.7 L859.9 464.9" stroke="#858585" stroke-width="3.75" fill="none"/><path d="M859.9 464.9 L927.0 482.0 M924.9 464.9 L857.0 482.0" stroke="#858585" stroke-width="3.75" fill="none"/><path d="M857.0 482.0 L927.0 482.0" stroke="#858585" stroke-width="3.5" fill="none"/><path d="M897 242 L887.5 482 M897 242 L901.5 482" stroke="#858585" stroke-width="3.0" fill="none"/><path d="M888.2 292.0 L857 302 L888.2 305 M905.8 292.0 L952 302 L905.8 305" stroke="#858585" stroke-width="5" fill="none"/><path d="M883.0 293.7 L880.4 304.4 M913.5 293.7 L917.3 304.4 M877.8 295.3 L875.2 304.0 M921.2 295.3 L925.0 304.0 M872.6 297.0 L870.0 303.5 M928.9 297.0 L932.7 303.5 M867.4 298.7 L864.8 303.1 M936.6 298.7 L940.4 303.1 M862.2 300.3 L859.6 302.7 M944.3 300.3 L948.1 302.7 " stroke="#858585" stroke-width="3.0" fill="none"/><path d="M860 303 q-4 18 3 19 q7 0 6-12 M949 303 q4 18 -3 19 q-7 0 -6-12" stroke="#556070" stroke-width="0.8" fill="none"/><path d="M880.1 348.0 L828 358 L880.1 361 M913.9 348.0 L979 358 L913.9 361" stroke="#858585" stroke-width="5" fill="none"/><path d="M871.4 349.7 L867.1 360.4 M924.8 349.7 L930.2 360.4 M862.7 351.3 L858.4 360.0 M935.6 351.3 L941.0 360.0 M854.0 353.0 L849.7 359.5 M946.5 353.0 L951.9 359.5 M845.4 354.7 L841.0 359.1 M957.3 354.7 L962.7 359.1 M836.7 356.3 L832.3 358.7 M968.2 356.3 L973.6 358.7 " stroke="#858585" stroke-width="3.0" fill="none"/><path d="M831 359 q-4 18 3 19 q7 0 6-12 M976 359 q4 18 -3 19 q-7 0 -6-12" stroke="#556070" stroke-width="0.8" fill="none"/><path d="M872.8 398.0 L844 408 L872.8 411 M921.2 398.0 L962 408 L921.2 411" stroke="#858585" stroke-width="5" fill="none"/><path d="M868.0 399.7 L865.6 410.4 M928.0 399.7 L931.4 410.4 M863.2 401.3 L860.8 410.0 M934.8 401.3 L938.2 410.0 M858.4 403.0 L856.0 409.5 M941.6 403.0 L945.0 409.5 M853.6 404.7 L851.2 409.1 M948.4 404.7 L951.8 409.1 M848.8 406.3 L846.4 408.7 M955.2 406.3 L958.6 408.7 " stroke="#858585" stroke-width="3.0" fill="none"/><path d="M847 409 q-4 18 3 19 q7 0 6-12 M959 409 q4 18 -3 19 q-7 0 -6-12" stroke="#556070" stroke-width="0.8" fill="none"/></g><ellipse cx="871" cy="531" rx="5" ry="7" fill="#3a3a3a"/><ellipse cx="887" cy="534" rx="4" ry="3.5" fill="#3a3a3a"/><ellipse cx="898" cy="536" rx="2.5" ry="2" fill="#3a3a3a"/><ellipse cx="906" cy="535" rx="3.5" ry="3" fill="#3a3a3a"/><ellipse cx="915" cy="536.5" rx="2.5" ry="1.8" fill="#3a3a3a"/><ellipse cx="925.5" cy="535.5" rx="4.5" ry="3.5" fill="#3a3a3a"/><rect x="865" y="536" width="68" height="3" fill="#4a4a4a"/><rect x="865" y="539" width="68" height="15" filter="url(#gtex)"/><rect x="941" y="483" width="68" height="71" fill="url(#tsky)"/><g transform="translate(941,483) scale(0.19) translate(-680,-184)"><path d="M680 197 Q760 300 850 418 M700 184 Q780 290 828 360 M1040 190 Q1000 270 978 360 M1040 215 Q1000 300 961 410" stroke="#8a8a8a" stroke-width="5" fill="none"/><path d="M736 308 L716 482 M736 308 L749 482" stroke="#9a9a9a" stroke-width="5.7" fill="none"/><path d="M736.0 308.0 L736.9 320.4 M736.0 308.0 L734.6 320.4" stroke="#9a9a9a" stroke-width="3.75" fill="none"/><path d="M734.6 320.4 L737.9 332.9 M736.9 320.4 L733.1 332.9" stroke="#9a9a9a" stroke-width="3.75" fill="none"/><path d="M733.1 332.9 L737.9 332.9" stroke="#9a9a9a" stroke-width="3.5" fill="none"/><path d="M733.1 332.9 L738.8 345.3 M737.9 332.9 L731.7 345.3" stroke="#9a9a9a" stroke-width="3.75" fill="none"/><path d="M731.7 345.3 L739.7 357.7 M738.8 345.3 L730.3 357.7" stroke="#9a9a9a" stroke-width="3.75" fill="none"/><path d="M730.3 357.7 L739.7 357.7" stroke="#9a9a9a" stroke-width="3.5" fill="none"/><path d="M730.3 357.7 L740.6 370.1 M739.7 357.7 L728.9 370.1" stroke="#9a9a9a" stroke-width="3.75" fill="none"/><path d="M728.9 370.1 L741.6 382.6 M740.6 370.1 L727.4 382.6" stroke="#9a9a9a" stroke-width="3.75" fill="none"/><path d="M727.4 382.6 L741.6 382.6" stroke="#9a9a9a" stroke-width="3.5" fill="none"/><path d="M727.4 382.6 L742.5 395.0 M741.6 382.6 L726.0 395.0" stroke="#9a9a9a" stroke-width="3.75" fill="none"/><path d="M726.0 395.0 L743.4 407.4 M742.5 395.0 L724.6 407.4" stroke="#9a9a9a" stroke-width="3.75" fill="none"/><path d="M724.6 407.4 L743.4 407.4" stroke="#9a9a9a" stroke-width="3.5" fill="none"/><path d="M724.6 407.4 L744.4 419.9 M743.4 407.4 L723.1 419.9" stroke="#9a9a9a" stroke-width="3.75" fill="none"/><path d="M723.1 419.9 L745.3 432.3 M744.4 419.9 L721.7 432.3" stroke="#9a9a9a" stroke-width="3.75" fill="none"/><path d="M721.7 432.3 L745.3 432.3" stroke="#9a9a9a" stroke-width="3.5" fill="none"/><path d="M721.7 432.3 L746.2 444.7 M745.3 432.3 L720.3 444.7" stroke="#9a9a9a" stroke-width="3.75" fill="none"/><path d="M720.3 444.7 L747.1 457.1 M746.2 444.7 L718.9 457.1" stroke="#9a9a9a" stroke-width="3.75" fill="none"/><path d="M718.9 457.1 L747.1 457.1" stroke="#9a9a9a" stroke-width="3.5" fill="none"/><path d="M718.9 457.1 L748.1 469.6 M747.1 457.1 L717.4 469.6" stroke="#9a9a9a" stroke-width="3.75" fill="none"/><path d="M717.4 469.6 L749.0 482.0 M748.1 469.6 L716.0 482.0" stroke="#9a9a9a" stroke-width="3.75" fill="none"/><path d="M716.0 482.0 L749.0 482.0" stroke="#9a9a9a" stroke-width="3.5" fill="none"/><path d="M736 308 L731.0 482 M736 308 L737.5 482" stroke="#9a9a9a" stroke-width="3.0" fill="none"/><path d="M732.7 333.0 L709 343 L732.7 346 M739.3 333.0 L761 343 L739.3 346" stroke="#9a9a9a" stroke-width="5" fill="none"/><path d="M728.7 334.7 L726.8 345.4 M742.9 334.7 L744.7 345.4 M724.8 336.3 L722.8 345.0 M746.5 336.3 L748.4 345.0 M720.8 338.0 L718.9 344.5 M750.2 338.0 L752.0 344.5 M716.9 339.7 L714.9 344.1 M753.8 339.7 L755.6 344.1 M712.9 341.3 L711.0 343.7 M757.4 341.3 L759.2 343.7 " stroke="#9a9a9a" stroke-width="3.0" fill="none"/><path d="M712 344 q-4 18 3 19 q7 0 6-12 M758 344 q4 18 -3 19 q-7 0 -6-12" stroke="#556070" stroke-width="0.8" fill="none"/><path d="M730.3 358.0 L703 368 L730.3 371 M741.7 358.0 L767 368 L741.7 371" stroke="#9a9a9a" stroke-width="5" fill="none"/><path d="M725.8 359.7 L723.5 370.4 M745.9 359.7 L748.0 370.4 M721.2 361.3 L718.9 370.0 M750.1 361.3 L752.2 370.0 M716.7 363.0 L714.4 369.5 M754.3 363.0 L756.5 369.5 M712.1 364.7 L709.8 369.1 M758.6 364.7 L760.7 369.1 M707.6 366.3 L705.3 368.7 M762.8 366.3 L764.9 368.7 " stroke="#9a9a9a" stroke-width="3.0" fill="none"/><path d="M706 369 q-4 18 3 19 q7 0 6-12 M764 369 q4 18 -3 19 q-7 0 -6-12" stroke="#556070" stroke-width="0.8" fill="none"/><path d="M897 242 L857 482 M897 242 L927 482" stroke="#858585" stroke-width="5.7" fill="none"/><path d="M897.0 242.0 L899.1 259.1 M897.0 242.0 L894.1 259.1" stroke="#858585" stroke-width="3.75" fill="none"/><path d="M894.1 259.1 L901.3 276.3 M899.1 259.1 L891.3 276.3" stroke="#858585" stroke-width="3.75" fill="none"/><path d="M891.3 276.3 L901.3 276.3" stroke="#858585" stroke-width="3.5" fill="none"/><path d="M891.3 276.3 L903.4 293.4 M901.3 276.3 L888.4 293.4" stroke="#858585" stroke-width="3.75" fill="none"/><path d="M888.4 293.4 L905.6 310.6 M903.4 293.4 L885.6 310.6" stroke="#858585" stroke-width="3.75" fill="none"/><path d="M885.6 310.6 L905.6 310.6" stroke="#858585" stroke-width="3.5" fill="none"/><path d="M885.6 310.6 L907.7 327.7 M905.6 310.6 L882.7 327.7" stroke="#858585" stroke-width="3.75" fill="none"/><path d="M882.7 327.7 L909.9 344.9 M907.7 327.7 L879.9 344.9" stroke="#858585" stroke-width="3.75" fill="none"/><path d="M879.9 344.9 L909.9 344.9" stroke="#858585" stroke-width="3.5" fill="none"/><path d="M879.9 344.9 L912.0 362.0 M909.9 344.9 L877.0 362.0" stroke="#858585" stroke-width="3.75" fill="none"/><path d="M877.0 362.0 L914.1 379.1 M912.0 362.0 L874.1 379.1" stroke="#858585" stroke-width="3.75" fill="none"/><path d="M874.1 379.1 L914.1 379.1" stroke="#858585" stroke-width="3.5" fill="none"/><path d="M874.1 379.1 L916.3 396.3 M914.1 379.1 L871.3 396.3" stroke="#858585" stroke-width="3.75" fill="none"/><path d="M871.3 396.3 L918.4 413.4 M916.3 396.3 L868.4 413.4" stroke="#858585" stroke-width="3.75" fill="none"/><path d="M868.4 413.4 L918.4 413.4" stroke="#858585" stroke-width="3.5" fill="none"/><path d="M868.4 413.4 L920.6 430.6 M918.4 413.4 L865.6 430.6" stroke="#858585" stroke-width="3.75" fill="none"/><path d="M865.6 430.6 L922.7 447.7 M920.6 430.6 L862.7 447.7" stroke="#858585" stroke-width="3.75" fill="none"/><path d="M862.7 447.7 L922.7 447.7" stroke="#858585" stroke-width="3.5" fill="none"/><path d="M862.7 447.7 L924.9 464.9 M922.7 447.7 L859.9 464.9" stroke="#858585" stroke-width="3.75" fill="none"/><path d="M859.9 464.9 L927.0 482.0 M924.9 464.9 L857.0 482.0" stroke="#858585" stroke-width="3.75" fill="none"/><path d="M857.0 482.0 L927.0 482.0" stroke="#858585" stroke-width="3.5" fill="none"/><path d="M897 242 L887.5 482 M897 242 L901.5 482" stroke="#858585" stroke-width="3.0" fill="none"/><path d="M888.2 292.0 L857 302 L888.2 305 M905.8 292.0 L952 302 L905.8 305" stroke="#858585" stroke-width="5" fill="none"/><path d="M883.0 293.7 L880.4 304.4 M913.5 293.7 L917.3 304.4 M877.8 295.3 L875.2 304.0 M921.2 295.3 L925.0 304.0 M872.6 297.0 L870.0 303.5 M928.9 297.0 L932.7 303.5 M867.4 298.7 L864.8 303.1 M936.6 298.7 L940.4 303.1 M862.2 300.3 L859.6 302.7 M944.3 300.3 L948.1 302.7 " stroke="#858585" stroke-width="3.0" fill="none"/><path d="M860 303 q-4 18 3 19 q7 0 6-12 M949 303 q4 18 -3 19 q-7 0 -6-12" stroke="#556070" stroke-width="0.8" fill="none"/><path d="M880.1 348.0 L828 358 L880.1 361 M913.9 348.0 L979 358 L913.9 361" stroke="#858585" stroke-width="5" fill="none"/><path d="M871.4 349.7 L867.1 360.4 M924.8 349.7 L930.2 360.4 M862.7 351.3 L858.4 360.0 M935.6 351.3 L941.0 360.0 M854.0 353.0 L849.7 359.5 M946.5 353.0 L951.9 359.5 M845.4 354.7 L841.0 359.1 M957.3 354.7 L962.7 359.1 M836.7 356.3 L832.3 358.7 M968.2 356.3 L973.6 358.7 " stroke="#858585" stroke-width="3.0" fill="none"/><path d="M831 359 q-4 18 3 19 q7 0 6-12 M976 359 q4 18 -3 19 q-7 0 -6-12" stroke="#556070" stroke-width="0.8" fill="none"/><path d="M872.8 398.0 L844 408 L872.8 411 M921.2 398.0 L962 408 L921.2 411" stroke="#858585" stroke-width="5" fill="none"/><path d="M868.0 399.7 L865.6 410.4 M928.0 399.7 L931.4 410.4 M863.2 401.3 L860.8 410.0 M934.8 401.3 L938.2 410.0 M858.4 403.0 L856.0 409.5 M941.6 403.0 L945.0 409.5 M853.6 404.7 L851.2 409.1 M948.4 404.7 L951.8 409.1 M848.8 406.3 L846.4 408.7 M955.2 406.3 L958.6 408.7 " stroke="#858585" stroke-width="3.0" fill="none"/><path d="M847 409 q-4 18 3 19 q7 0 6-12 M959 409 q4 18 -3 19 q-7 0 -6-12" stroke="#556070" stroke-width="0.8" fill="none"/></g><ellipse cx="947" cy="531" rx="5" ry="7" fill="#3a3a3a"/><ellipse cx="963" cy="534" rx="4" ry="3.5" fill="#3a3a3a"/><ellipse cx="974" cy="536" rx="2.5" ry="2" fill="#3a3a3a"/><ellipse cx="982" cy="535" rx="3.5" ry="3" fill="#3a3a3a"/><ellipse cx="991" cy="536.5" rx="2.5" ry="1.8" fill="#3a3a3a"/><ellipse cx="1001.5" cy="535.5" rx="4.5" ry="3.5" fill="#3a3a3a"/><rect x="941" y="536" width="68" height="3" fill="#4a4a4a"/><rect x="941" y="539" width="68" height="15" filter="url(#gtex)"/><path d="M702.5 510 L694 518 L702.5 526" stroke="#e6e6e6" stroke-width="3.8" fill="none" stroke-linecap="round" stroke-linejoin="round"/><path d="M1020.5 510 L1029 518 L1020.5 526" stroke="#e6e6e6" stroke-width="3.8" fill="none" stroke-linecap="round" stroke-linejoin="round"/><rect x="680" y="184" width="101" height="28" fill="#ffffff" fill-opacity="0.28"/></g></svg>
<div class="t" style="left:697px;top:192.15px;font-size:14px;line-height:14px;color:#333;font-weight:bold;">OTLM #21</div>
<div class="card" style="left:869px;top:586px;width:552px;height:381px;box-shadow:1px 2px 3px rgba(0,0,0,0.15)"></div>
<svg class="abs" style="left:870px;top:588px" width="550" height="378" viewBox="870 588 550 378"><defs>
<filter id="tex" x="0" y="0" width="100%" height="100%" color-interpolation-filters="sRGB">
<feTurbulence type="fractalNoise" baseFrequency="0.07 0.13" numOctaves="3" seed="5" result="n1"/>
<feColorMatrix in="n1" type="matrix" values="0.6 0 0 0 -0.07  0.62 0 0 0 -0.01  0.36 0 0 0 -0.02  0 0 0 0 1"/>
</filter>
<filter id="tex3" x="0" y="0" width="100%" height="100%" color-interpolation-filters="sRGB">
<feTurbulence type="turbulence" baseFrequency="0.035 0.06" numOctaves="3" seed="17"/>
<feColorMatrix type="matrix" values="0 0 0 0 0.06  0 0 0 0 0.12  0 0 0 0 0.07  -3.2 0 0 0 0.95"/>
</filter>
<filter id="tex2" x="0" y="0" width="100%" height="100%" color-interpolation-filters="sRGB">
<feTurbulence type="fractalNoise" baseFrequency="0.018" numOctaves="2" seed="21"/>
<feColorMatrix type="matrix" values="0 0 0 0 0.08  0 0 0 0 0.15  0 0 0 0 0.09  -2.4 0 0 0 1.3"/>
</filter>
<filter id="blur8"><feGaussianBlur stdDeviation="14"/></filter>
<filter id="blur3"><feGaussianBlur stdDeviation="3"/></filter>
<filter id="ts" x="-20%" y="-50%" width="140%" height="200%"><feDropShadow dx="0" dy="0" stdDeviation="0.8" flood-color="#000" flood-opacity="0.9"/></filter>
<clipPath id="mc"><rect x="870" y="588" width="550" height="378"/></clipPath>
</defs>
<g clip-path="url(#mc)">
<rect x="870" y="588" width="550" height="378" fill="#3b5534"/>
<rect x="870" y="588" width="550" height="378" filter="url(#tex)"/>
<rect x="870" y="588" width="550" height="378" filter="url(#tex2)" opacity="0.7"/>
<rect x="870" y="588" width="550" height="378" filter="url(#tex3)" opacity="0.55"/>
<g filter="url(#blur8)">
<ellipse cx="955" cy="622" rx="90" ry="38" fill="#7d8657" opacity="0.55"/><ellipse cx="905" cy="895" rx="45" ry="75" fill="#7f8a62" opacity="0.5"/><ellipse cx="1395" cy="700" rx="30" ry="75" fill="#7a8a5c" opacity="0.5"/><ellipse cx="1175" cy="815" rx="75" ry="16" fill="#758560" opacity="0.45"/><ellipse cx="1330" cy="835" rx="80" ry="18" fill="#6f805a" opacity="0.35"/><ellipse cx="1135" cy="625" rx="25" ry="25" fill="#6a7a50" opacity="0.3"/><ellipse cx="880" cy="740" rx="20" ry="60" fill="#6a7a52" opacity="0.3"/><ellipse cx="1280" cy="670" rx="70" ry="35" fill="#0f1d0c" opacity="0.6"/><ellipse cx="1070" cy="632" rx="48" ry="32" fill="#132210" opacity="0.5"/><ellipse cx="1030" cy="740" rx="80" ry="50" fill="#16260f" opacity="0.45"/><ellipse cx="1110" cy="930" rx="130" ry="35" fill="#142410" opacity="0.45"/><ellipse cx="1320" cy="910" rx="70" ry="45" fill="#172812" opacity="0.35"/><ellipse cx="945" cy="805" rx="40" ry="20" fill="#172812" opacity="0.3"/><ellipse cx="1250" cy="745" rx="40" ry="30" fill="#1a2a14" opacity="0.3"/></g><g filter="url(#blur3)" fill="#e8ece8" opacity="0.75"><ellipse cx="932" cy="753" rx="14" ry="5"/><ellipse cx="955" cy="751" rx="16" ry="5"/><ellipse cx="975" cy="745" rx="8" ry="3"/><ellipse cx="930" cy="770" rx="4" ry="8"/><ellipse cx="885" cy="702" rx="12" ry="3"/></g><g fill="#f0f2f0" opacity="0.9"><path d="M916 750 L925 744 L934 748 L942 741 L948 746 L944 753 L935 757 L924 758Z"/><path d="M945 752 L956 748 L966 744 L974 741 L978 745 L970 751 L958 756Z"/><path d="M928 760 L934 757 L936 766 L932 774 L928 768Z"/><path d="M872 702 L884 698 L895 701 L888 705 L876 706Z"/></g><path d="M870 640 L908 636 Q920 625 927 607 Q940 596 962 592 L985 588" stroke="#2f7a78" stroke-width="2.5" fill="none" opacity="0.8"/><path d="M973 588 Q985 596 995 597 L1040 590" stroke="#2f7a78" stroke-width="2" fill="none" opacity="0.7"/><path d="M870 649 L902 642 L948 651 L965 640 L1009 627 L1045 626" stroke="#cdb26a" stroke-width="1.2" fill="none" opacity="0.8"/><path d="M964 588 L965 645 L944 659 L948 689 L925 718" stroke="#cdb26a" stroke-width="1.2" fill="none" opacity="0.8"/><path d="M1038 597 L1028 624" stroke="#cdb26a" stroke-width="1.2" fill="none" opacity="0.8"/><path d="M1080 588 L1118 622 L1145 610" stroke="#cdb26a" stroke-width="1.2" fill="none" opacity="0.8"/><path d="M1118 622 L1103 641 L1072 646" stroke="#cdb26a" stroke-width="1.2" fill="none" opacity="0.8"/><path d="M1118 622 L1143 660 L1160 690" stroke="#cdb26a" stroke-width="1.2" fill="none" opacity="0.8"/><path d="M870 819 L935 861 L948 900" stroke="#cdb26a" stroke-width="1.2" fill="none" opacity="0.8"/><path d="M956 872 L992 859 L1042 855 L1070 834 L1090 819 L1145 809 L1164 803 L1197 808 L1202 821 L1225 821 L1233 830 L1282 834 L1298 826 L1328 825 L1336 817 L1361 813 L1376 827 L1403 830 L1420 829" stroke="#cdb26a" stroke-width="1.2" fill="none" opacity="0.8"/><path d="M927 903 L1007 907 L1025 897 L1045 907 L1038 924 L1072 907 L1107 892 L1145 888" stroke="#cdb26a" stroke-width="1.2" fill="none" opacity="0.8"/><path d="M948 844 L935 949" stroke="#cdb26a" stroke-width="1.2" fill="none" opacity="0.8"/><path d="M904 850 L895 930 L870 940" stroke="#cdb26a" stroke-width="1.2" fill="none" opacity="0.8"/><path d="M870 905 L940 918 L960 966" stroke="#cdb26a" stroke-width="1.2" fill="none" opacity="0.8"/><path d="M1214 825 L1206 838 L1200 850 L1202 867 L1191 888 L1179 909 L1187 926 L1225 949 L1279 966" stroke="#cdb26a" stroke-width="1.2" fill="none" opacity="0.8"/><path d="M1145 884 L1179 909" stroke="#cdb26a" stroke-width="1.2" fill="none" opacity="0.8"/><path d="M1239 811 L1269 800 L1290 777 L1300 760" stroke="#cdb26a" stroke-width="1.2" fill="none" opacity="0.8"/><path d="M1145 611 L1174 607 L1202 610 L1218 621 L1229 616 L1260 624 L1283 626 L1290 642 L1347 632 L1355 636" stroke="#cdb26a" stroke-width="1.2" fill="none" opacity="0.8"/><path d="M1365 588 L1369 617 L1365 645 L1364 674" stroke="#cdb26a" stroke-width="1.2" fill="none" opacity="0.8"/><path d="M1378 622 L1382 655 L1370 670" stroke="#cdb26a" stroke-width="1.2" fill="none" opacity="0.8"/><path d="M1373 687 L1388 693 L1412 703 L1420 710" stroke="#cdb26a" stroke-width="1.2" fill="none" opacity="0.8"/><path d="M1355 729 L1378 722 L1420 722" stroke="#cdb26a" stroke-width="1.2" fill="none" opacity="0.8"/><path d="M1145 664 L1164 689 L1187 703" stroke="#cdb26a" stroke-width="1.2" fill="none" opacity="0.8"/><path d="M1183 796 L1179 777" stroke="#cdb26a" stroke-width="1.2" fill="none" opacity="0.8"/><path d="M884 705 L904 720 L920 714 L933 739" stroke="#c8cfc8" stroke-width="1.1" fill="none" opacity="0.8"/><path d="M944 718 L950 706 L981 699 L992 689 L996 672 L1008 668 L1036 670 L1038 653 L1046 632 L1059 607 L1080 605 L1103 594 L1110 588" stroke="#c8cfc8" stroke-width="1.1" fill="none" opacity="0.8"/><path d="M1290 588 L1300 600 L1320 603" stroke="#c8cfc8" stroke-width="1.1" fill="none" opacity="0.8"/><path d="M1363 832 L1363 848 L1347 863 L1346 876 L1351 899 L1369 915 L1393 922 L1393 939 L1388 966" stroke="#c8cfc8" stroke-width="1.1" fill="none" opacity="0.8"/><path d="M992 895 Q1010 886 1020 880 Q1035 866 1050 857 L1076 847 Q1085 838 1095 826 Q1105 815 1125 811 L1218 811 Q1228 812 1239 811 Q1265 795 1286 776 Q1296 766 1305 757 Q1330 740 1341 734 Q1352 722 1358 708 Q1362 695 1364 684" stroke="#6aa6e0" stroke-width="3.2" fill="none" stroke-linecap="round"/><circle cx="992" cy="895" r="9" fill="#fff"/><circle cx="1305" cy="757" r="9" fill="#fff"/><circle cx="1364" cy="684" r="9" fill="#fff"/><circle cx="1239" cy="811" r="9.3" fill="#e3001b"/><rect x="895" y="844" width="14" height="7" rx="1.2" fill="#4e9a3e"/><rect x="1110" y="807.5" width="14" height="7" rx="1.2" fill="#4e9a3e"/><rect x="1411" y="707" width="14" height="7" rx="1.2" fill="#4e9a3e"/><circle cx="926.5" cy="741" r="4.8" fill="#3d9a4a"/><path d="M923 744 L926.5 749 L930 744Z" fill="#3d9a4a"/><path d="M924 743 L926 739.5 L927.5 741.5 L928.5 740.3 L930 743Z" fill="#fff"/></g></svg>
<div class="abs" style="left:870px;top:588px;width:550px;height:378px;overflow:hidden"><div class="abs" style="left:-870px;top:-588px;width:1440px;height:1024px"><div class="t" style="left:870px;top:607.89px;font-size:10.5px;line-height:10.5px;color:#eee;text-shadow:0 0 2px #000,0 0 1px #000">ec</div>
<div class="t" style="left:1015px;top:620.89px;font-size:10.5px;line-height:10.5px;color:#eee;text-shadow:0 0 2px #000,0 0 1px #000">Pliberk</div>
<div class="t" style="left:1124px;top:658.89px;font-size:10.5px;line-height:10.5px;color:#eee;text-shadow:0 0 2px #000,0 0 1px #000">Slovenj</div>
<div class="t" style="left:1124px;top:668.89px;font-size:10.5px;line-height:10.5px;color:#eee;text-shadow:0 0 2px #000,0 0 1px #000">Gradec</div>
<div class="t" style="left:933px;top:670.89px;font-size:10.5px;line-height:10.5px;color:#eee;text-shadow:0 0 2px #000,0 0 1px #000">Železna</div>
<div class="t" style="left:927px;top:680.89px;font-size:10.5px;line-height:10.5px;color:#eee;text-shadow:0 0 2px #000,0 0 1px #000">Kapla-Bela</div>
<div class="t" style="left:945px;top:723.39px;font-size:10.5px;line-height:10.5px;color:#eee;text-shadow:0 0 2px #000,0 0 1px #000">Logarska</div>
<div class="t" style="left:951px;top:732.89px;font-size:10.5px;line-height:10.5px;color:#eee;text-shadow:0 0 2px #000,0 0 1px #000">Dolina</div>
<div class="t" style="left:877.5px;top:738.89px;font-size:10.5px;line-height:10.5px;color:#7ccf7c;text-shadow:0 0 2px #000,0 0 1px #000">Grintovec</div>
<div class="t" style="left:1078px;top:758.89px;font-size:10.5px;line-height:10.5px;color:#eee;text-shadow:0 0 2px #000,0 0 1px #000">Mozirje</div>
<div class="t" style="left:1227.5px;top:693.89px;font-size:10.5px;line-height:10.5px;color:#eee;text-shadow:0 0 2px #000,0 0 1px #000">Rogla</div>
<div class="t" style="left:1343px;top:635.39px;font-size:10.5px;line-height:10.5px;color:#eee;text-shadow:0 0 2px #000,0 0 1px #000">Maribor</div>
<div class="t" style="left:1311px;top:722.89px;font-size:10.5px;line-height:10.5px;color:#eee;text-shadow:0 0 2px #000,0 0 1px #000">Slovenska</div>
<div class="t" style="left:1317px;top:733.39px;font-size:10.5px;line-height:10.5px;color:#eee;text-shadow:0 0 2px #000,0 0 1px #000">Bistrica</div>
<div class="t" style="left:1251px;top:741.39px;font-size:10.5px;line-height:10.5px;color:#eee;text-shadow:0 0 2px #000,0 0 1px #000">Zreče</div>
<div class="t" style="left:983px;top:819.39px;font-size:10.5px;line-height:10.5px;color:#eee;text-shadow:0 0 2px #000,0 0 1px #000">Snovik</div>
<div class="t" style="left:938px;top:825.89px;font-size:10.5px;line-height:10.5px;color:#eee;text-shadow:0 0 2px #000,0 0 1px #000">Kamnik</div>
<div class="t" style="left:931px;top:871.39px;font-size:10.5px;line-height:10.5px;color:#eee;text-shadow:0 0 2px #000,0 0 1px #000">Domžale</div>
<div class="t" style="left:890.5px;top:918.87px;font-size:12.6px;line-height:12.6px;color:#eee;text-shadow:0 0 2px #000,0 0 1px #000">Ljubljana</div>
<div class="t" style="left:1091.5px;top:870.89px;font-size:10.5px;line-height:10.5px;color:#eee;text-shadow:0 0 2px #000,0 0 1px #000">Zagorje</div>
<div class="t" style="left:1092.5px;top:880.39px;font-size:10.5px;line-height:10.5px;color:#eee;text-shadow:0 0 2px #000,0 0 1px #000">ob Savi</div>
<div class="t" style="left:1072.5px;top:898.88px;font-size:11.6px;line-height:11.6px;color:#c8dcff;text-shadow:0 0 2px #000,0 0 1px #000">Sava</div>
<div class="t" style="left:1204px;top:815.39px;font-size:10.5px;line-height:10.5px;color:#eee;text-shadow:0 0 2px #000,0 0 1px #000">Celje</div>
<div class="t" style="left:1343px;top:812.89px;font-size:10.5px;line-height:10.5px;color:#eee;text-shadow:0 0 2px #000,0 0 1px #000">Rogaška</div>
<div class="t" style="left:1345.5px;top:822.89px;font-size:10.5px;line-height:10.5px;color:#eee;text-shadow:0 0 2px #000,0 0 1px #000">Slatina</div>
<div class="t" style="left:1190.5px;top:864.39px;font-size:10.5px;line-height:10.5px;color:#eee;text-shadow:0 0 2px #000,0 0 1px #000">Laško</div>
<div class="t" style="left:1171.7px;top:876.39px;font-size:10.5px;line-height:10.5px;color:#eee;text-shadow:0 0 2px #000,0 0 1px #000">Rimske</div>
<div class="t" style="left:1172px;top:886.39px;font-size:10.5px;line-height:10.5px;color:#eee;text-shadow:0 0 2px #000,0 0 1px #000">Toplice</div>
<div class="t" style="left:1322.6px;top:861.69px;font-size:10.5px;line-height:10.5px;color:#eee;text-shadow:0 0 2px #000,0 0 1px #000">Podčetrtek</div>
<div class="t" style="left:1399px;top:906.49px;font-size:10.5px;line-height:10.5px;color:#eee;text-shadow:0 0 2px #000,0 0 1px #000">Tuhelj</div>
<div class="t" style="left:1403.8px;top:916.69px;font-size:10.5px;line-height:10.5px;color:#eee;text-shadow:0 0 2px #000,0 0 1px #000">Toplice</div>
<div class="t" style="left:1311px;top:927.61px;font-size:10.5px;line-height:10.5px;color:#8fd08f;font-style:italic;text-shadow:0 0 2px #000">Kozjanski park</div>
<div class="t" style="left:895px;top:844px;width:14px;text-align:center;font-size:6px;line-height:7px;color:#fff;font-weight:bold">E61</div>
<div class="t" style="left:1110px;top:807.5px;width:14px;text-align:center;font-size:6px;line-height:7px;color:#fff;font-weight:bold">E57</div>
</div></div>
<div class="abs" style="left:1121px;top:706px;width:120px;height:87px;background:#fff;box-shadow:0 1px 3px rgba(0,0,0,0.3)"></div>
<div class="abs" style="left:1121px;top:730px;width:5px;height:19px;background:#e3001b"></div>
<div class="abs" style="left:1121px;top:749px;width:5px;height:19px;background:#f0c03a"></div>
<div class="t" style="left:880px;width:600px;text-align:center;top:710.30px;font-size:15px;line-height:15px;color:#333;">OTLM #21</div>
<div class="t" style="left:1129px;top:737.53px;font-size:10px;line-height:10px;color:#888;font-weight:bold;">Sag</div>
<div class="t" style="left:1129px;top:756.03px;font-size:10px;line-height:10px;color:#888;font-weight:bold;">Clearance</div>
<div class="t" style="left:1129px;top:775.03px;font-size:10px;line-height:10px;color:#888;font-weight:bold;">Current</div>
<div class="t" style="left:635.5px;width:600px;text-align:right;top:735.15px;font-size:14px;line-height:14px;color:#333;">10,7 m</div>
<div class="t" style="left:635.5px;width:600px;text-align:right;top:754.65px;font-size:14px;line-height:14px;color:#333;">15 m</div>
<div class="t" style="left:635.5px;width:600px;text-align:right;top:773.65px;font-size:14px;line-height:14px;color:#333;">145 A</div>
<svg class="abs" style="left:88px;top:910px" width="86" height="84" viewBox="88 910 86 84"><path d="M121.7 921.7 A20.5 20.5 0 1 1 131 960.5" fill="none" stroke="#fff" stroke-width="8"/><path d="M113.2 950.25 A20.5 20.5 0 0 0 122.3 958.6" fill="none" stroke="#fff" stroke-width="8" /><path d="M100 943.5 H111 L117 923.5 L126 955.5 L131 943.5 H140" fill="none" stroke="#333" stroke-width="9" stroke-linejoin="round"/><path d="M100 943.5 H111 L117 923.5 L126 955.5 L131 943.5 H140" fill="none" stroke="#fff" stroke-width="5" stroke-linejoin="round"/><rect x="91" y="983.5" width="80.5" height="8" fill="#fff"/></svg>
<div class="t" style="left:104px;top:971px;font-size:12px;line-height:12px;font-weight:bold;color:#fff;letter-spacing:6.2px">OTLM</div>
<div class="t" style="left:91px;top:984.5px;width:80.5px;text-align:center;font-size:7px;line-height:7px;font-weight:bold;color:#333">KNILL GRUPPE</div>
</body></html>
